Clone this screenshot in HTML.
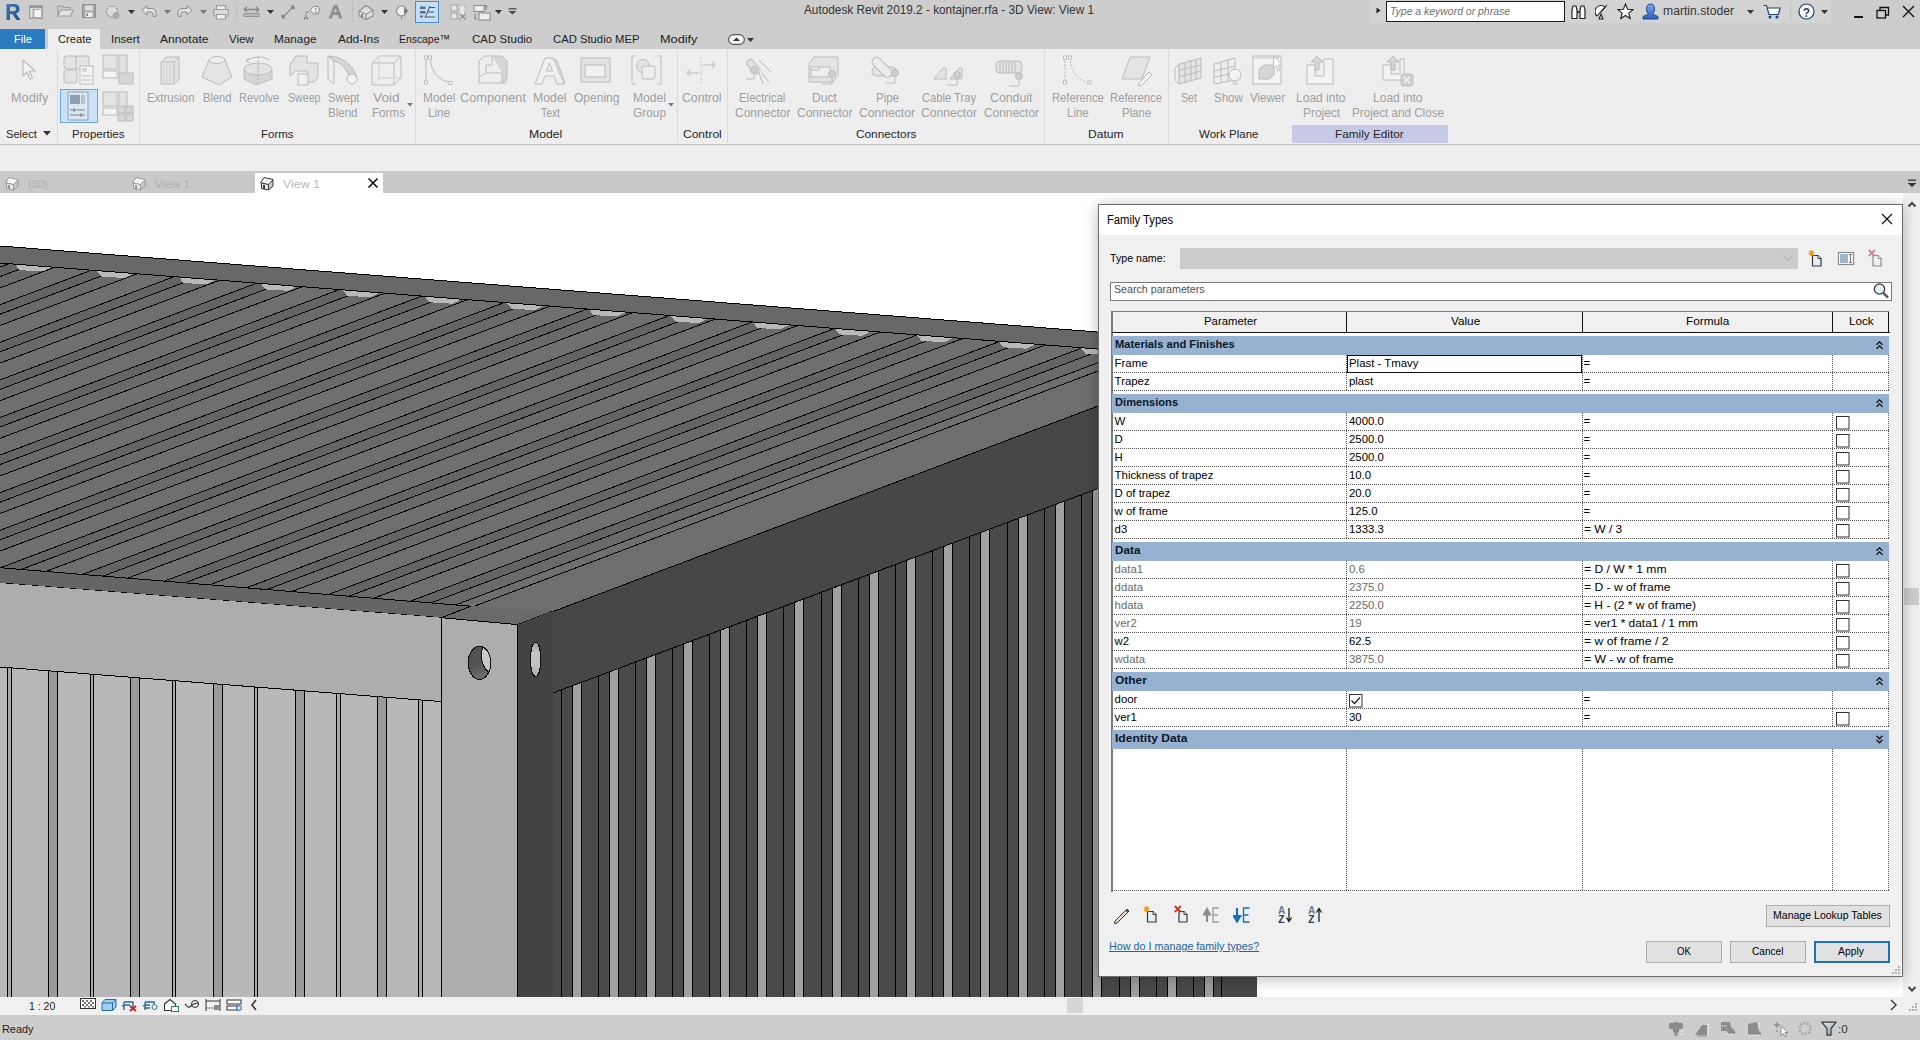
<!DOCTYPE html>
<html><head><meta charset="utf-8">
<style>
*{margin:0;padding:0;box-sizing:border-box}
html,body{width:1920px;height:1040px;overflow:hidden;background:#fff;font-family:"Liberation Sans",sans-serif;font-size:12px;color:#000}
.a{position:absolute}
.t{position:absolute;white-space:nowrap;line-height:1;transform-origin:0 0}
</style></head><body>
<svg class="a" style="left:0;top:0" width="1920" height="1040" viewBox="0 0 1920 1040" shape-rendering="crispEdges"><rect x="0.0" y="193.0" width="1920.0" height="804.0" fill="#ffffff"/>
<defs><clipPath id="roofclip"><polygon points="0.0,263.0 1300.0,364.9 1300.0,329.9 551.5,611.5 470.8,606.2 0.0,567.7"/></clipPath><clipPath id="rfclip"><polygon points="553,693.0 1300,412.7 1300,997 553,997"/></clipPath><clipPath id="ffclip"><polygon points="0,667.0 441.5,701.6 441.5,997 0,997"/></clipPath><linearGradient id="hole1" x1="0" y1="0" x2="0.3" y2="1"><stop offset="0" stop-color="#505050"/><stop offset="0.6" stop-color="#545454"/><stop offset="1" stop-color="#6a6a6a"/></linearGradient><linearGradient id="hole2" x1="0" y1="0" x2="0" y2="1"><stop offset="0" stop-color="#9a9a9a"/><stop offset="0.3" stop-color="#c4c4c4"/><stop offset="0.7" stop-color="#c0c0c0"/><stop offset="1" stop-color="#a8a8a8"/></linearGradient></defs>
<polygon points="0.0,263.0 1300.0,364.9 1300.0,329.9 551.5,611.5 470.8,606.2 0.0,567.7" fill="#6b6b6b"/>
<g clip-path="url(#roofclip)">
<polygon points="0.0,201.4 1300.0,-288.7 1300.0,-277.4 0.0,212.7" fill="#6a6a6a"/>
<polygon points="0.0,212.7 1300.0,-277.4 1300.0,-260.6 0.0,229.5" fill="#6f6f6f"/>
<polygon points="0.0,229.5 1300.0,-260.6 1300.0,-251.1 0.0,239.0" fill="#646464"/>
<polygon points="0.0,239.0 1300.0,-251.1 1300.0,-239.8 0.0,250.3" fill="#6a6a6a"/>
<polygon points="0.0,250.3 1300.0,-239.8 1300.0,-223.0 0.0,267.1" fill="#6f6f6f"/>
<polygon points="0.0,267.1 1300.0,-223.0 1300.0,-213.5 0.0,276.6" fill="#646464"/>
<polygon points="0.0,276.6 1300.0,-213.5 1300.0,-202.2 0.0,287.9" fill="#6a6a6a"/>
<polygon points="0.0,287.9 1300.0,-202.2 1300.0,-185.4 0.0,304.7" fill="#6f6f6f"/>
<polygon points="0.0,304.7 1300.0,-185.4 1300.0,-175.9 0.0,314.2" fill="#646464"/>
<polygon points="0.0,314.2 1300.0,-175.9 1300.0,-164.6 0.0,325.5" fill="#6a6a6a"/>
<polygon points="0.0,325.5 1300.0,-164.6 1300.0,-147.8 0.0,342.3" fill="#6f6f6f"/>
<polygon points="0.0,342.3 1300.0,-147.8 1300.0,-138.3 0.0,351.8" fill="#646464"/>
<polygon points="0.0,351.8 1300.0,-138.3 1300.0,-127.0 0.0,363.1" fill="#6a6a6a"/>
<polygon points="0.0,363.1 1300.0,-127.0 1300.0,-110.2 0.0,379.9" fill="#6f6f6f"/>
<polygon points="0.0,379.9 1300.0,-110.2 1300.0,-100.7 0.0,389.4" fill="#646464"/>
<polygon points="0.0,389.4 1300.0,-100.7 1300.0,-89.4 0.0,400.7" fill="#6a6a6a"/>
<polygon points="0.0,400.7 1300.0,-89.4 1300.0,-72.6 0.0,417.5" fill="#6f6f6f"/>
<polygon points="0.0,417.5 1300.0,-72.6 1300.0,-63.1 0.0,427.0" fill="#646464"/>
<polygon points="0.0,427.0 1300.0,-63.1 1300.0,-51.8 0.0,438.3" fill="#6a6a6a"/>
<polygon points="0.0,438.3 1300.0,-51.8 1300.0,-35.0 0.0,455.1" fill="#6f6f6f"/>
<polygon points="0.0,455.1 1300.0,-35.0 1300.0,-25.5 0.0,464.6" fill="#646464"/>
<polygon points="0.0,464.6 1300.0,-25.5 1300.0,-14.2 0.0,475.9" fill="#6a6a6a"/>
<polygon points="0.0,475.9 1300.0,-14.2 1300.0,2.6 0.0,492.7" fill="#6f6f6f"/>
<polygon points="0.0,492.7 1300.0,2.6 1300.0,12.1 0.0,502.2" fill="#646464"/>
<polygon points="0.0,502.2 1300.0,12.1 1300.0,23.4 0.0,513.5" fill="#6a6a6a"/>
<polygon points="0.0,513.5 1300.0,23.4 1300.0,40.2 0.0,530.3" fill="#6f6f6f"/>
<polygon points="0.0,530.3 1300.0,40.2 1300.0,49.7 0.0,539.8" fill="#646464"/>
<polygon points="0.0,539.8 1300.0,49.7 1300.0,61.0 0.0,551.1" fill="#6a6a6a"/>
<polygon points="0.0,551.1 1300.0,61.0 1300.0,77.8 0.0,567.9" fill="#6f6f6f"/>
<polygon points="0.0,567.9 1300.0,77.8 1300.0,87.3 0.0,577.4" fill="#646464"/>
<polygon points="0.0,577.4 1300.0,87.3 1300.0,98.6 0.0,588.7" fill="#6a6a6a"/>
<polygon points="0.0,588.7 1300.0,98.6 1300.0,115.4 0.0,605.5" fill="#6f6f6f"/>
<polygon points="0.0,605.5 1300.0,115.4 1300.0,124.9 0.0,615.0" fill="#646464"/>
<polygon points="0.0,615.0 1300.0,124.9 1300.0,136.2 0.0,626.3" fill="#6a6a6a"/>
<polygon points="0.0,626.3 1300.0,136.2 1300.0,153.0 0.0,643.1" fill="#6f6f6f"/>
<polygon points="0.0,643.1 1300.0,153.0 1300.0,162.5 0.0,652.6" fill="#646464"/>
<polygon points="0.0,652.6 1300.0,162.5 1300.0,173.8 0.0,663.9" fill="#6a6a6a"/>
<polygon points="0.0,663.9 1300.0,173.8 1300.0,190.6 0.0,680.7" fill="#6f6f6f"/>
<polygon points="0.0,680.7 1300.0,190.6 1300.0,200.1 0.0,690.2" fill="#646464"/>
<polygon points="0.0,690.2 1300.0,200.1 1300.0,211.4 0.0,701.5" fill="#6a6a6a"/>
<polygon points="0.0,701.5 1300.0,211.4 1300.0,228.2 0.0,718.3" fill="#6f6f6f"/>
<polygon points="0.0,718.3 1300.0,228.2 1300.0,237.7 0.0,727.8" fill="#646464"/>
<polygon points="0.0,727.8 1300.0,237.7 1300.0,249.0 0.0,739.1" fill="#6a6a6a"/>
<polygon points="0.0,739.1 1300.0,249.0 1300.0,265.8 0.0,755.9" fill="#6f6f6f"/>
<polygon points="0.0,755.9 1300.0,265.8 1300.0,275.3 0.0,765.4" fill="#646464"/>
<polygon points="0.0,765.4 1300.0,275.3 1300.0,286.6 0.0,776.7" fill="#6a6a6a"/>
<polygon points="0.0,776.7 1300.0,286.6 1300.0,303.4 0.0,793.5" fill="#6f6f6f"/>
<polygon points="0.0,793.5 1300.0,303.4 1300.0,312.9 0.0,803.0" fill="#646464"/>
<polygon points="0.0,803.0 1300.0,312.9 1300.0,324.2 0.0,814.3" fill="#6a6a6a"/>
<polygon points="0.0,814.3 1300.0,324.2 1300.0,341.0 0.0,831.1" fill="#6f6f6f"/>
<polygon points="0.0,831.1 1300.0,341.0 1300.0,350.5 0.0,840.6" fill="#646464"/>
<polygon points="0.0,840.6 1300.0,350.5 1300.0,361.8 0.0,851.9" fill="#6a6a6a"/>
<polygon points="0.0,851.9 1300.0,361.8 1300.0,378.6 0.0,868.7" fill="#6f6f6f"/>
<polygon points="0.0,868.7 1300.0,378.6 1300.0,388.1 0.0,878.2" fill="#646464"/>
<polygon points="0.0,878.2 1300.0,388.1 1300.0,399.4 0.0,889.5" fill="#6a6a6a"/>
<polygon points="0.0,889.5 1300.0,399.4 1300.0,416.2 0.0,906.3" fill="#6f6f6f"/>
<polygon points="0.0,906.3 1300.0,416.2 1300.0,425.7 0.0,915.8" fill="#646464"/>
<polygon points="0.0,915.8 1300.0,425.7 1300.0,437.0 0.0,927.1" fill="#6a6a6a"/>
<polygon points="0.0,927.1 1300.0,437.0 1300.0,453.8 0.0,943.9" fill="#6f6f6f"/>
<polygon points="0.0,943.9 1300.0,453.8 1300.0,463.3 0.0,953.4" fill="#646464"/>
<polygon points="0.0,953.4 1300.0,463.3 1300.0,474.6 0.0,964.7" fill="#6a6a6a"/>
<polygon points="0.0,964.7 1300.0,474.6 1300.0,491.4 0.0,981.5" fill="#6f6f6f"/>
<polygon points="0.0,981.5 1300.0,491.4 1300.0,500.9 0.0,991.0" fill="#646464"/>
<polygon points="0.0,991.0 1300.0,500.9 1300.0,512.2 0.0,1002.3" fill="#6a6a6a"/>
<polygon points="0.0,1002.3 1300.0,512.2 1300.0,529.0 0.0,1019.1" fill="#6f6f6f"/>
<polygon points="0.0,1019.1 1300.0,529.0 1300.0,538.5 0.0,1028.6" fill="#646464"/>
<polygon points="0.0,1028.6 1300.0,538.5 1300.0,549.8 0.0,1039.9" fill="#6a6a6a"/>
<polygon points="0.0,1039.9 1300.0,549.8 1300.0,566.6 0.0,1056.7" fill="#6f6f6f"/>
<polygon points="0.0,1056.7 1300.0,566.6 1300.0,576.1 0.0,1066.2" fill="#646464"/>
<polygon points="0.0,1066.2 1300.0,576.1 1300.0,587.4 0.0,1077.5" fill="#6a6a6a"/>
<polygon points="0.0,1077.5 1300.0,587.4 1300.0,604.2 0.0,1094.3" fill="#6f6f6f"/>
<polygon points="0.0,1094.3 1300.0,604.2 1300.0,613.7 0.0,1103.8" fill="#646464"/>
<polygon points="0.0,1103.8 1300.0,613.7 1300.0,625.0 0.0,1115.1" fill="#6a6a6a"/>
<polygon points="0.0,1115.1 1300.0,625.0 1300.0,641.8 0.0,1131.9" fill="#6f6f6f"/>
<polygon points="0.0,1131.9 1300.0,641.8 1300.0,651.3 0.0,1141.4" fill="#646464"/>
<polygon points="0.0,1141.4 1300.0,651.3 1300.0,662.6 0.0,1152.7" fill="#6a6a6a"/>
<polygon points="0.0,1152.7 1300.0,662.6 1300.0,679.4 0.0,1169.5" fill="#6f6f6f"/>
<polygon points="0.0,1169.5 1300.0,679.4 1300.0,688.9 0.0,1179.0" fill="#646464"/>
<line x1="0.0" y1="201.4" x2="1300.0" y2="-288.7" stroke="#000" stroke-width="1"/>
<line x1="0.0" y1="212.7" x2="1300.0" y2="-277.4" stroke="#000" stroke-width="1"/>
<line x1="0.0" y1="229.5" x2="1300.0" y2="-260.6" stroke="#000" stroke-width="1"/>
<line x1="0.0" y1="239.0" x2="1300.0" y2="-251.1" stroke="#000" stroke-width="1"/>
<line x1="0.0" y1="250.3" x2="1300.0" y2="-239.8" stroke="#000" stroke-width="1"/>
<line x1="0.0" y1="267.1" x2="1300.0" y2="-223.0" stroke="#000" stroke-width="1"/>
<line x1="0.0" y1="276.6" x2="1300.0" y2="-213.5" stroke="#000" stroke-width="1"/>
<line x1="0.0" y1="287.9" x2="1300.0" y2="-202.2" stroke="#000" stroke-width="1"/>
<line x1="0.0" y1="304.7" x2="1300.0" y2="-185.4" stroke="#000" stroke-width="1"/>
<line x1="0.0" y1="314.2" x2="1300.0" y2="-175.9" stroke="#000" stroke-width="1"/>
<line x1="0.0" y1="325.5" x2="1300.0" y2="-164.6" stroke="#000" stroke-width="1"/>
<line x1="0.0" y1="342.3" x2="1300.0" y2="-147.8" stroke="#000" stroke-width="1"/>
<line x1="0.0" y1="351.8" x2="1300.0" y2="-138.3" stroke="#000" stroke-width="1"/>
<line x1="0.0" y1="363.1" x2="1300.0" y2="-127.0" stroke="#000" stroke-width="1"/>
<line x1="0.0" y1="379.9" x2="1300.0" y2="-110.2" stroke="#000" stroke-width="1"/>
<line x1="0.0" y1="389.4" x2="1300.0" y2="-100.7" stroke="#000" stroke-width="1"/>
<line x1="0.0" y1="400.7" x2="1300.0" y2="-89.4" stroke="#000" stroke-width="1"/>
<line x1="0.0" y1="417.5" x2="1300.0" y2="-72.6" stroke="#000" stroke-width="1"/>
<line x1="0.0" y1="427.0" x2="1300.0" y2="-63.1" stroke="#000" stroke-width="1"/>
<line x1="0.0" y1="438.3" x2="1300.0" y2="-51.8" stroke="#000" stroke-width="1"/>
<line x1="0.0" y1="455.1" x2="1300.0" y2="-35.0" stroke="#000" stroke-width="1"/>
<line x1="0.0" y1="464.6" x2="1300.0" y2="-25.5" stroke="#000" stroke-width="1"/>
<line x1="0.0" y1="475.9" x2="1300.0" y2="-14.2" stroke="#000" stroke-width="1"/>
<line x1="0.0" y1="492.7" x2="1300.0" y2="2.6" stroke="#000" stroke-width="1"/>
<line x1="0.0" y1="502.2" x2="1300.0" y2="12.1" stroke="#000" stroke-width="1"/>
<line x1="0.0" y1="513.5" x2="1300.0" y2="23.4" stroke="#000" stroke-width="1"/>
<line x1="0.0" y1="530.3" x2="1300.0" y2="40.2" stroke="#000" stroke-width="1"/>
<line x1="0.0" y1="539.8" x2="1300.0" y2="49.7" stroke="#000" stroke-width="1"/>
<line x1="0.0" y1="551.1" x2="1300.0" y2="61.0" stroke="#000" stroke-width="1"/>
<line x1="0.0" y1="567.9" x2="1300.0" y2="77.8" stroke="#000" stroke-width="1"/>
<line x1="0.0" y1="577.4" x2="1300.0" y2="87.3" stroke="#000" stroke-width="1"/>
<line x1="0.0" y1="588.7" x2="1300.0" y2="98.6" stroke="#000" stroke-width="1"/>
<line x1="0.0" y1="605.5" x2="1300.0" y2="115.4" stroke="#000" stroke-width="1"/>
<line x1="0.0" y1="615.0" x2="1300.0" y2="124.9" stroke="#000" stroke-width="1"/>
<line x1="0.0" y1="626.3" x2="1300.0" y2="136.2" stroke="#000" stroke-width="1"/>
<line x1="0.0" y1="643.1" x2="1300.0" y2="153.0" stroke="#000" stroke-width="1"/>
<line x1="0.0" y1="652.6" x2="1300.0" y2="162.5" stroke="#000" stroke-width="1"/>
<line x1="0.0" y1="663.9" x2="1300.0" y2="173.8" stroke="#000" stroke-width="1"/>
<line x1="0.0" y1="680.7" x2="1300.0" y2="190.6" stroke="#000" stroke-width="1"/>
<line x1="0.0" y1="690.2" x2="1300.0" y2="200.1" stroke="#000" stroke-width="1"/>
<line x1="0.0" y1="701.5" x2="1300.0" y2="211.4" stroke="#000" stroke-width="1"/>
<line x1="0.0" y1="718.3" x2="1300.0" y2="228.2" stroke="#000" stroke-width="1"/>
<line x1="0.0" y1="727.8" x2="1300.0" y2="237.7" stroke="#000" stroke-width="1"/>
<line x1="0.0" y1="739.1" x2="1300.0" y2="249.0" stroke="#000" stroke-width="1"/>
<line x1="0.0" y1="755.9" x2="1300.0" y2="265.8" stroke="#000" stroke-width="1"/>
<line x1="0.0" y1="765.4" x2="1300.0" y2="275.3" stroke="#000" stroke-width="1"/>
<line x1="0.0" y1="776.7" x2="1300.0" y2="286.6" stroke="#000" stroke-width="1"/>
<polygon points="0.0,785.0 1300.0,294.9 1300.0,329.9 0.0,820.0" fill="#6e6e6e"/>
<line x1="0.0" y1="785.0" x2="1300.0" y2="294.9" stroke="#000" stroke-width="1"/>
</g>
<polygon points="14.6,264.1 51.6,267.0 42.6,271.5 19.6,270.1" fill="#b9b9b9"/>
<polygon points="96.6,270.6 133.6,273.5 124.6,278.0 101.6,276.6" fill="#b9b9b9"/>
<polygon points="178.6,277.0 215.6,279.9 206.6,284.4 183.6,283.0" fill="#b9b9b9"/>
<polygon points="260.6,283.4 297.6,286.3 288.6,290.8 265.6,289.4" fill="#b9b9b9"/>
<polygon points="342.6,289.9 379.6,292.8 370.6,297.3 347.6,295.9" fill="#b9b9b9"/>
<polygon points="424.6,296.3 461.6,299.2 452.6,303.7 429.6,302.3" fill="#b9b9b9"/>
<polygon points="506.6,302.7 543.6,305.6 534.6,310.1 511.6,308.7" fill="#b9b9b9"/>
<polygon points="588.6,309.1 625.6,312.0 616.6,316.5 593.6,315.1" fill="#b9b9b9"/>
<polygon points="670.6,315.6 707.6,318.5 698.6,323.0 675.6,321.6" fill="#b9b9b9"/>
<polygon points="752.6,322.0 789.6,324.9 780.6,329.4 757.6,328.0" fill="#b9b9b9"/>
<polygon points="834.6,328.4 871.6,331.3 862.6,335.8 839.6,334.4" fill="#b9b9b9"/>
<polygon points="916.6,334.9 953.6,337.8 944.6,342.3 921.6,340.9" fill="#b9b9b9"/>
<polygon points="998.6,341.3 1035.6,344.2 1026.6,348.7 1003.6,347.3" fill="#b9b9b9"/>
<polygon points="1080.6,347.7 1117.6,350.6 1108.6,355.1 1085.6,353.7" fill="#b9b9b9"/>
<polygon points="1162.6,354.1 1199.6,357.0 1190.6,361.5 1167.6,360.1" fill="#b9b9b9"/>
<polygon points="1244.6,360.6 1281.6,363.5 1272.6,368.0 1249.6,366.6" fill="#b9b9b9"/>
<polygon points="0.0,246.0 1300.0,347.9 1300.0,364.9 0.0,263.0" fill="#686868"/>
<line x1="0.0" y1="246.0" x2="1300.0" y2="347.9" stroke="#000" stroke-width="1"/>
<line x1="0.0" y1="263.0" x2="1300.0" y2="364.9" stroke="#000" stroke-width="1"/>
<polygon points="0.0,567.7 470.8,606.2 441.5,617.7 0.0,583.0" fill="#656565"/>
<line x1="0.0" y1="567.7" x2="470.8" y2="606.2" stroke="#000" stroke-width="1"/>
<line x1="0.0" y1="583.0" x2="441.5" y2="617.7" stroke="#000" stroke-width="1"/>
<polygon points="441.5,617.7 470.8,606.2 551.5,611.5 517.7,624.6" fill="#6a6a6a"/>
<line x1="441.5" y1="617.7" x2="470.8" y2="606.2" stroke="#000" stroke-width="1"/>
<line x1="517.7" y1="624.6" x2="553.0" y2="611.0" stroke="#000" stroke-width="1"/>
<polygon points="0.0,583.0 441.5,617.7 441.5,997.0 0.0,997.0" fill="#adadad"/>
<g clip-path="url(#ffclip)">
<rect x="0.0" y="600.0" width="441.5" height="400.0" fill="#b8b8b8"/>
<rect x="7.0" y="600.0" width="4.0" height="400.0" fill="#a9a9a9"/>
<line x1="7.5" y1="600.0" x2="7.5" y2="997.0" stroke="#000" stroke-width="1"/>
<line x1="11.5" y1="600.0" x2="11.5" y2="997.0" stroke="#000" stroke-width="1"/>
<rect x="90.0" y="600.0" width="3.0" height="400.0" fill="#a9a9a9"/>
<line x1="90.5" y1="600.0" x2="90.5" y2="997.0" stroke="#000" stroke-width="1"/>
<line x1="93.5" y1="600.0" x2="93.5" y2="997.0" stroke="#000" stroke-width="1"/>
<rect x="172.0" y="600.0" width="3.0" height="400.0" fill="#a9a9a9"/>
<line x1="172.5" y1="600.0" x2="172.5" y2="997.0" stroke="#000" stroke-width="1"/>
<line x1="175.5" y1="600.0" x2="175.5" y2="997.0" stroke="#000" stroke-width="1"/>
<rect x="254.0" y="600.0" width="3.0" height="400.0" fill="#a9a9a9"/>
<line x1="254.5" y1="600.0" x2="254.5" y2="997.0" stroke="#000" stroke-width="1"/>
<line x1="257.5" y1="600.0" x2="257.5" y2="997.0" stroke="#000" stroke-width="1"/>
<rect x="336.0" y="600.0" width="4.0" height="400.0" fill="#a9a9a9"/>
<line x1="336.5" y1="600.0" x2="336.5" y2="997.0" stroke="#000" stroke-width="1"/>
<line x1="340.5" y1="600.0" x2="340.5" y2="997.0" stroke="#000" stroke-width="1"/>
<rect x="418.0" y="600.0" width="4.0" height="400.0" fill="#a9a9a9"/>
<line x1="418.5" y1="600.0" x2="418.5" y2="997.0" stroke="#000" stroke-width="1"/>
<line x1="422.5" y1="600.0" x2="422.5" y2="997.0" stroke="#000" stroke-width="1"/>
<rect x="48.0" y="600.0" width="9.0" height="400.0" fill="#9a9a9a"/>
<line x1="48.5" y1="600.0" x2="48.5" y2="997.0" stroke="#000" stroke-width="1"/>
<line x1="57.5" y1="600.0" x2="57.5" y2="997.0" stroke="#000" stroke-width="1"/>
<rect x="130.0" y="600.0" width="9.0" height="400.0" fill="#9a9a9a"/>
<line x1="130.5" y1="600.0" x2="130.5" y2="997.0" stroke="#000" stroke-width="1"/>
<line x1="139.5" y1="600.0" x2="139.5" y2="997.0" stroke="#000" stroke-width="1"/>
<rect x="213.0" y="600.0" width="9.0" height="400.0" fill="#9a9a9a"/>
<line x1="213.5" y1="600.0" x2="213.5" y2="997.0" stroke="#000" stroke-width="1"/>
<line x1="222.5" y1="600.0" x2="222.5" y2="997.0" stroke="#000" stroke-width="1"/>
<rect x="295.0" y="600.0" width="9.0" height="400.0" fill="#9a9a9a"/>
<line x1="295.5" y1="600.0" x2="295.5" y2="997.0" stroke="#000" stroke-width="1"/>
<line x1="304.5" y1="600.0" x2="304.5" y2="997.0" stroke="#000" stroke-width="1"/>
<rect x="377.0" y="600.0" width="9.0" height="400.0" fill="#9a9a9a"/>
<line x1="377.5" y1="600.0" x2="377.5" y2="997.0" stroke="#000" stroke-width="1"/>
<line x1="386.5" y1="600.0" x2="386.5" y2="997.0" stroke="#000" stroke-width="1"/>
</g>
<line x1="0.0" y1="667.0" x2="441.5" y2="701.6" stroke="#000" stroke-width="1"/>
<polygon points="441.5,617.7 517.7,624.6 517.7,997.0 441.5,997.0" fill="#adadad"/>
<line x1="441.5" y1="617.7" x2="441.5" y2="997.0" stroke="#000" stroke-width="1"/>
<line x1="517.5" y1="624.6" x2="517.5" y2="997.0" stroke="#000" stroke-width="1"/>
<line x1="441.5" y1="617.7" x2="517.7" y2="624.6" stroke="#000" stroke-width="1"/>
<ellipse cx="479.5" cy="662.8" rx="11.2" ry="16.6" fill="url(#hole1)" stroke="#111" stroke-width="1.2"/>
<path d="M482.4,647 A11.2,16.6 0 0 1 488.8,672.3 Q482.5,667 481.6,659 Q481.3,652 482.4,647 Z" fill="#c9c9c9" stroke="#111" stroke-width="1"/>
<polygon points="517.7,624.6 553.0,611.0 553.0,997.0 517.7,997.0" fill="#434343"/>
<ellipse cx="535.6" cy="659.4" rx="5.3" ry="17.2" fill="url(#hole2)" stroke="#111" stroke-width="1.2"/>
<line x1="553.5" y1="611.0" x2="553.5" y2="997.0" stroke="#000" stroke-width="1"/>
<polygon points="553.0,611.5 1300.0,329.9 1300.0,412.7 553.0,693.0" fill="#474747"/>
<line x1="553.0" y1="611.5" x2="1300.0" y2="329.9" stroke="#000" stroke-width="1"/>
<polygon points="553.0,693.0 1300.0,412.7 1300.0,997.0 553.0,997.0" fill="#4a4a4a"/>
<g clip-path="url(#rfclip)">
<rect x="572.0" y="300.0" width="9.0" height="700.0" fill="#a0a0a0"/>
<line x1="561.5" y1="300.0" x2="561.5" y2="997.0" stroke="#000" stroke-width="1"/>
<line x1="572.5" y1="300.0" x2="572.5" y2="997.0" stroke="#000" stroke-width="1"/>
<line x1="581.5" y1="300.0" x2="581.5" y2="997.0" stroke="#000" stroke-width="1"/>
<rect x="609.0" y="300.0" width="9.0" height="700.0" fill="#a0a0a0"/>
<line x1="598.5" y1="300.0" x2="598.5" y2="997.0" stroke="#000" stroke-width="1"/>
<line x1="609.5" y1="300.0" x2="609.5" y2="997.0" stroke="#000" stroke-width="1"/>
<line x1="618.5" y1="300.0" x2="618.5" y2="997.0" stroke="#000" stroke-width="1"/>
<rect x="646.0" y="300.0" width="9.0" height="700.0" fill="#a0a0a0"/>
<line x1="635.5" y1="300.0" x2="635.5" y2="997.0" stroke="#000" stroke-width="1"/>
<line x1="646.5" y1="300.0" x2="646.5" y2="997.0" stroke="#000" stroke-width="1"/>
<line x1="655.5" y1="300.0" x2="655.5" y2="997.0" stroke="#000" stroke-width="1"/>
<rect x="683.0" y="300.0" width="9.0" height="700.0" fill="#a0a0a0"/>
<line x1="672.5" y1="300.0" x2="672.5" y2="997.0" stroke="#000" stroke-width="1"/>
<line x1="683.5" y1="300.0" x2="683.5" y2="997.0" stroke="#000" stroke-width="1"/>
<line x1="692.5" y1="300.0" x2="692.5" y2="997.0" stroke="#000" stroke-width="1"/>
<rect x="720.0" y="300.0" width="9.0" height="700.0" fill="#a0a0a0"/>
<line x1="709.5" y1="300.0" x2="709.5" y2="997.0" stroke="#000" stroke-width="1"/>
<line x1="720.5" y1="300.0" x2="720.5" y2="997.0" stroke="#000" stroke-width="1"/>
<line x1="729.5" y1="300.0" x2="729.5" y2="997.0" stroke="#000" stroke-width="1"/>
<rect x="757.0" y="300.0" width="9.0" height="700.0" fill="#a0a0a0"/>
<line x1="746.5" y1="300.0" x2="746.5" y2="997.0" stroke="#000" stroke-width="1"/>
<line x1="757.5" y1="300.0" x2="757.5" y2="997.0" stroke="#000" stroke-width="1"/>
<line x1="766.5" y1="300.0" x2="766.5" y2="997.0" stroke="#000" stroke-width="1"/>
<rect x="794.0" y="300.0" width="9.0" height="700.0" fill="#a0a0a0"/>
<line x1="783.5" y1="300.0" x2="783.5" y2="997.0" stroke="#000" stroke-width="1"/>
<line x1="794.5" y1="300.0" x2="794.5" y2="997.0" stroke="#000" stroke-width="1"/>
<line x1="803.5" y1="300.0" x2="803.5" y2="997.0" stroke="#000" stroke-width="1"/>
<rect x="832.0" y="300.0" width="9.0" height="700.0" fill="#a0a0a0"/>
<line x1="821.5" y1="300.0" x2="821.5" y2="997.0" stroke="#000" stroke-width="1"/>
<line x1="832.5" y1="300.0" x2="832.5" y2="997.0" stroke="#000" stroke-width="1"/>
<line x1="841.5" y1="300.0" x2="841.5" y2="997.0" stroke="#000" stroke-width="1"/>
<rect x="869.0" y="300.0" width="9.0" height="700.0" fill="#a0a0a0"/>
<line x1="858.5" y1="300.0" x2="858.5" y2="997.0" stroke="#000" stroke-width="1"/>
<line x1="869.5" y1="300.0" x2="869.5" y2="997.0" stroke="#000" stroke-width="1"/>
<line x1="878.5" y1="300.0" x2="878.5" y2="997.0" stroke="#000" stroke-width="1"/>
<rect x="906.0" y="300.0" width="9.0" height="700.0" fill="#a0a0a0"/>
<line x1="895.5" y1="300.0" x2="895.5" y2="997.0" stroke="#000" stroke-width="1"/>
<line x1="906.5" y1="300.0" x2="906.5" y2="997.0" stroke="#000" stroke-width="1"/>
<line x1="915.5" y1="300.0" x2="915.5" y2="997.0" stroke="#000" stroke-width="1"/>
<rect x="943.0" y="300.0" width="9.0" height="700.0" fill="#a0a0a0"/>
<line x1="932.5" y1="300.0" x2="932.5" y2="997.0" stroke="#000" stroke-width="1"/>
<line x1="943.5" y1="300.0" x2="943.5" y2="997.0" stroke="#000" stroke-width="1"/>
<line x1="952.5" y1="300.0" x2="952.5" y2="997.0" stroke="#000" stroke-width="1"/>
<rect x="980.0" y="300.0" width="9.0" height="700.0" fill="#a0a0a0"/>
<line x1="969.5" y1="300.0" x2="969.5" y2="997.0" stroke="#000" stroke-width="1"/>
<line x1="980.5" y1="300.0" x2="980.5" y2="997.0" stroke="#000" stroke-width="1"/>
<line x1="989.5" y1="300.0" x2="989.5" y2="997.0" stroke="#000" stroke-width="1"/>
<rect x="1018.0" y="300.0" width="9.0" height="700.0" fill="#a0a0a0"/>
<line x1="1007.5" y1="300.0" x2="1007.5" y2="997.0" stroke="#000" stroke-width="1"/>
<line x1="1018.5" y1="300.0" x2="1018.5" y2="997.0" stroke="#000" stroke-width="1"/>
<line x1="1027.5" y1="300.0" x2="1027.5" y2="997.0" stroke="#000" stroke-width="1"/>
<rect x="1055.0" y="300.0" width="9.0" height="700.0" fill="#a0a0a0"/>
<line x1="1044.5" y1="300.0" x2="1044.5" y2="997.0" stroke="#000" stroke-width="1"/>
<line x1="1055.5" y1="300.0" x2="1055.5" y2="997.0" stroke="#000" stroke-width="1"/>
<line x1="1064.5" y1="300.0" x2="1064.5" y2="997.0" stroke="#000" stroke-width="1"/>
<rect x="1092.0" y="300.0" width="9.0" height="700.0" fill="#a0a0a0"/>
<line x1="1081.5" y1="300.0" x2="1081.5" y2="997.0" stroke="#000" stroke-width="1"/>
<line x1="1092.5" y1="300.0" x2="1092.5" y2="997.0" stroke="#000" stroke-width="1"/>
<line x1="1101.5" y1="300.0" x2="1101.5" y2="997.0" stroke="#000" stroke-width="1"/>
<rect x="1130.0" y="300.0" width="9.0" height="700.0" fill="#a0a0a0"/>
<line x1="1119.5" y1="300.0" x2="1119.5" y2="997.0" stroke="#000" stroke-width="1"/>
<line x1="1130.5" y1="300.0" x2="1130.5" y2="997.0" stroke="#000" stroke-width="1"/>
<line x1="1139.5" y1="300.0" x2="1139.5" y2="997.0" stroke="#000" stroke-width="1"/>
<rect x="1167.0" y="300.0" width="9.0" height="700.0" fill="#a0a0a0"/>
<line x1="1156.5" y1="300.0" x2="1156.5" y2="997.0" stroke="#000" stroke-width="1"/>
<line x1="1167.5" y1="300.0" x2="1167.5" y2="997.0" stroke="#000" stroke-width="1"/>
<line x1="1176.5" y1="300.0" x2="1176.5" y2="997.0" stroke="#000" stroke-width="1"/>
<rect x="1204.0" y="300.0" width="9.0" height="700.0" fill="#a0a0a0"/>
<line x1="1193.5" y1="300.0" x2="1193.5" y2="997.0" stroke="#000" stroke-width="1"/>
<line x1="1204.5" y1="300.0" x2="1204.5" y2="997.0" stroke="#000" stroke-width="1"/>
<line x1="1213.5" y1="300.0" x2="1213.5" y2="997.0" stroke="#000" stroke-width="1"/>
</g>
<line x1="553.0" y1="693.0" x2="1300.0" y2="412.7" stroke="#000" stroke-width="1"/>
<rect x="1221.5" y="700.0" width="35.5" height="297.0" fill="#474747"/>
<line x1="1221.5" y1="700.0" x2="1221.5" y2="997.0" stroke="#000" stroke-width="1"/>
<rect x="1257.0" y="900.0" width="700.0" height="97.0" fill="#ffffff"/>
</svg>
<div class="a" style="left:0px;top:0px;width:1920px;height:49px;background:#cdcdcd;"></div>
<div class="a" style="left:1370px;top:0px;width:461px;height:23px;background:#d3d3d3;"></div>
<div class="a" style="left:1386px;top:1px;width:179px;height:21px;background:#fff;border:1px solid #1a1a1a;"></div>
<span id="c1" class="t" style="transform:scaleX(0.9436);left:804.00px;top:3.62px;font-size:12.5px;color:#333;">Autodesk Revit 2019.2 - kontajner.rfa - 3D View: View 1</span>
<span id="c2" class="t" style="transform:scaleX(0.9497);left:1390.00px;top:6.19px;font-size:11px;color:#6f6f6f;font-style:italic;">Type a keyword or phrase</span>
<span id="c3" class="t" style="transform:scaleX(1.0138);left:1663.00px;top:5.34px;font-size:12px;color:#333;">martin.stoder</span>
<div class="a" style="left:0px;top:29px;width:45px;height:19.5px;background:#2a7ac0;"></div>
<div class="a" style="left:48px;top:29px;width:52px;height:20px;background:#eeeeee;"></div>
<span id="c4" class="t" style="transform:scaleX(0.9552);left:14.00px;top:33.00px;font-size:11.7px;color:#fff;">File</span>
<span id="c5" class="t" style="transform:scaleX(0.9546);left:57.50px;top:33.00px;font-size:11.7px;color:#222;">Create</span>
<span id="c6" class="t" style="transform:scaleX(0.9834);left:111.00px;top:33.00px;font-size:11.7px;color:#222;">Insert</span>
<span id="c7" class="t" style="transform:scaleX(1.0385);left:160.40px;top:33.00px;font-size:11.7px;color:#222;">Annotate</span>
<span id="c8" class="t" style="transform:scaleX(0.9751);left:229.20px;top:33.00px;font-size:11.7px;color:#222;">View</span>
<span id="c9" class="t" style="transform:scaleX(1.0059);left:274.20px;top:33.00px;font-size:11.7px;color:#222;">Manage</span>
<span id="c10" class="t" style="transform:scaleX(1.0228);left:337.50px;top:33.00px;font-size:11.7px;color:#222;">Add-Ins</span>
<span id="c11" class="t" style="transform:scaleX(0.8885);left:399.20px;top:33.00px;font-size:11.7px;color:#222;">Enscape™</span>
<span id="c12" class="t" style="transform:scaleX(0.9873);left:471.70px;top:33.00px;font-size:11.7px;color:#222;">CAD Studio</span>
<span id="c13" class="t" style="transform:scaleX(0.9650);left:552.50px;top:33.00px;font-size:11.7px;color:#222;">CAD Studio MEP</span>
<span id="c14" class="t" style="transform:scaleX(1.0889);left:660.00px;top:33.00px;font-size:11.7px;color:#222;">Modify</span>
<div class="a" style="left:0px;top:48.5px;width:1920px;height:96px;background:#eeeeee;border-bottom:1px solid #c4c4c4;"></div>
<div class="a" style="left:0px;top:145px;width:1920px;height:26px;background:#eeeeee;"></div>
<div class="a" style="left:56.5px;top:50px;width:1px;height:93px;background:#dadada;"></div>
<div class="a" style="left:139px;top:50px;width:1px;height:93px;background:#dadada;"></div>
<div class="a" style="left:415px;top:50px;width:1px;height:93px;background:#dadada;"></div>
<div class="a" style="left:676.5px;top:50px;width:1px;height:93px;background:#dadada;"></div>
<div class="a" style="left:727px;top:50px;width:1px;height:93px;background:#dadada;"></div>
<div class="a" style="left:1044px;top:50px;width:1px;height:93px;background:#dadada;"></div>
<div class="a" style="left:1167.5px;top:50px;width:1px;height:93px;background:#dadada;"></div>
<div class="a" style="left:1292px;top:125px;width:156px;height:18px;background:#c6cae6;"></div>
<span id="c15" class="t" style="transform:scaleX(1.0498);left:10.60px;top:91.76px;font-size:12.1px;color:#9e9e9e;">Modify</span>
<span id="c16" class="t" style="transform:scaleX(0.9421);left:146.50px;top:91.76px;font-size:12.1px;color:#9e9e9e;">Extrusion</span>
<span id="c17" class="t" style="transform:scaleX(0.9212);left:202.50px;top:91.76px;font-size:12.1px;color:#9e9e9e;">Blend</span>
<span id="c18" class="t" style="transform:scaleX(0.9210);left:239.25px;top:91.76px;font-size:12.1px;color:#9e9e9e;">Revolve</span>
<span id="c19" class="t" style="transform:scaleX(0.8787);left:287.50px;top:91.76px;font-size:12.1px;color:#9e9e9e;">Sweep</span>
<span id="c20" class="t" style="transform:scaleX(0.9368);left:327.50px;top:91.76px;font-size:12.1px;color:#9e9e9e;">Swept</span>
<span id="c21" class="t" style="transform:scaleX(0.9535);left:328.00px;top:106.76px;font-size:12.1px;color:#9e9e9e;">Blend</span>
<span id="c22" class="t" style="transform:scaleX(1.1360);left:372.50px;top:91.76px;font-size:12.1px;color:#9e9e9e;">Void</span>
<span id="c23" class="t" style="transform:scaleX(0.9631);left:372.00px;top:106.76px;font-size:12.1px;color:#9e9e9e;">Forms</span>
<span id="c24" class="t" style="transform:scaleX(0.9862);left:422.50px;top:91.76px;font-size:12.1px;color:#9e9e9e;">Model</span>
<span id="c25" class="t" style="transform:scaleX(0.9617);left:428.00px;top:106.76px;font-size:12.1px;color:#9e9e9e;">Line</span>
<span id="c26" class="t" style="transform:scaleX(1.0555);left:460.00px;top:91.76px;font-size:12.1px;color:#9e9e9e;">Component</span>
<span id="c27" class="t" style="transform:scaleX(1.0166);left:533.25px;top:91.76px;font-size:12.1px;color:#9e9e9e;">Model</span>
<span id="c28" class="t" style="transform:scaleX(0.8563);left:541.00px;top:106.76px;font-size:12.1px;color:#9e9e9e;">Text</span>
<span id="c29" class="t" style="transform:scaleX(0.9949);left:573.50px;top:91.76px;font-size:12.1px;color:#9e9e9e;">Opening</span>
<span id="c30" class="t" style="transform:scaleX(1.0014);left:632.50px;top:91.76px;font-size:12.1px;color:#9e9e9e;">Model</span>
<span id="c31" class="t" style="transform:scaleX(0.9814);left:633.00px;top:106.76px;font-size:12.1px;color:#9e9e9e;">Group</span>
<span id="c32" class="t" style="transform:scaleX(1.0128);left:682.00px;top:91.76px;font-size:12.1px;color:#9e9e9e;">Control</span>
<span id="c33" class="t" style="transform:scaleX(0.9427);left:739.25px;top:91.76px;font-size:12.1px;color:#9e9e9e;">Electrical</span>
<span id="c34" class="t" style="transform:scaleX(0.9944);left:734.50px;top:106.76px;font-size:12.1px;color:#9e9e9e;">Connector</span>
<span id="c35" class="t" style="transform:scaleX(1.0050);left:812.00px;top:91.76px;font-size:12.1px;color:#9e9e9e;">Duct</span>
<span id="c36" class="t" style="transform:scaleX(0.9944);left:796.50px;top:106.76px;font-size:12.1px;color:#9e9e9e;">Connector</span>
<span id="c37" class="t" style="transform:scaleX(0.9497);left:876.00px;top:91.76px;font-size:12.1px;color:#9e9e9e;">Pipe</span>
<span id="c38" class="t" style="transform:scaleX(1.0034);left:859.00px;top:106.76px;font-size:12.1px;color:#9e9e9e;">Connector</span>
<span id="c39" class="t" style="transform:scaleX(0.9233);left:922.00px;top:91.76px;font-size:12.1px;color:#9e9e9e;">Cable Tray</span>
<span id="c40" class="t" style="transform:scaleX(1.0034);left:921.00px;top:106.76px;font-size:12.1px;color:#9e9e9e;">Connector</span>
<span id="c41" class="t" style="transform:scaleX(1.0195);left:990.00px;top:91.76px;font-size:12.1px;color:#9e9e9e;">Conduit</span>
<span id="c42" class="t" style="transform:scaleX(0.9854);left:983.75px;top:106.76px;font-size:12.1px;color:#9e9e9e;">Connector</span>
<span id="c43" class="t" style="transform:scaleX(0.9272);left:1052.00px;top:91.76px;font-size:12.1px;color:#9e9e9e;">Reference</span>
<span id="c44" class="t" style="transform:scaleX(0.9508);left:1067.00px;top:106.76px;font-size:12.1px;color:#9e9e9e;">Line</span>
<span id="c45" class="t" style="transform:scaleX(0.9317);left:1110.00px;top:91.76px;font-size:12.1px;color:#9e9e9e;">Reference</span>
<span id="c46" class="t" style="transform:scaleX(0.9455);left:1122.00px;top:106.76px;font-size:12.1px;color:#9e9e9e;">Plane</span>
<span id="c47" class="t" style="transform:scaleX(0.8812);left:1181.00px;top:91.76px;font-size:12.1px;color:#9e9e9e;">Set</span>
<span id="c48" class="t" style="transform:scaleX(0.9499);left:1213.75px;top:91.76px;font-size:12.1px;color:#9e9e9e;">Show</span>
<span id="c49" class="t" style="transform:scaleX(0.9524);left:1250.00px;top:91.76px;font-size:12.1px;color:#9e9e9e;">Viewer</span>
<span id="c50" class="t" style="transform:scaleX(0.9947);left:1296.25px;top:91.76px;font-size:12.1px;color:#9e9e9e;">Load into</span>
<span id="c51" class="t" style="transform:scaleX(0.9830);left:1303.00px;top:106.76px;font-size:12.1px;color:#9e9e9e;">Project</span>
<span id="c52" class="t" style="transform:scaleX(0.9947);left:1373.00px;top:91.76px;font-size:12.1px;color:#9e9e9e;">Load into</span>
<span id="c53" class="t" style="transform:scaleX(0.9637);left:1352.00px;top:106.76px;font-size:12.1px;color:#9e9e9e;">Project and Close</span>
<span id="c54" class="t" style="transform:scaleX(0.9466);left:6.25px;top:128.35px;font-size:11.7px;color:#262626;">Select</span>
<span id="c55" class="t" style="transform:scaleX(0.9835);left:71.60px;top:128.35px;font-size:11.7px;color:#262626;">Properties</span>
<span id="c56" class="t" style="transform:scaleX(0.9811);left:261.25px;top:128.35px;font-size:11.7px;color:#262626;">Forms</span>
<span id="c57" class="t" style="transform:scaleX(1.0442);left:529.25px;top:128.35px;font-size:11.7px;color:#262626;">Model</span>
<span id="c58" class="t" style="transform:scaleX(1.0282);left:682.50px;top:128.35px;font-size:11.7px;color:#262626;">Control</span>
<span id="c59" class="t" style="transform:scaleX(1.0120);left:856.25px;top:128.35px;font-size:11.7px;color:#262626;">Connectors</span>
<span id="c60" class="t" style="transform:scaleX(1.0309);left:1088.25px;top:128.35px;font-size:11.7px;color:#262626;">Datum</span>
<span id="c61" class="t" style="transform:scaleX(0.9883);left:1199.25px;top:128.35px;font-size:11.7px;color:#262626;">Work Plane</span>
<span id="c62" class="t" style="transform:scaleX(1.0080);left:1335.00px;top:128.35px;font-size:11.7px;color:#262626;">Family Editor</span>
<svg class="a" style="left:43px;top:131px;" width="8" height="5" viewBox="0 0 8 5"><path d="M0,0H8L4,4.5Z" fill="#333"/></svg>
<svg class="a" style="left:407px;top:103px;" width="6" height="4" viewBox="0 0 6 4"><path d="M0,0H6L3,3.5Z" fill="#777"/></svg>
<svg class="a" style="left:668px;top:103px;" width="6" height="4" viewBox="0 0 6 4"><path d="M0,0H6L3,3.5Z" fill="#777"/></svg>
<div class="a" style="left:0px;top:171px;width:1920px;height:22px;background:#c9c9c9;"></div>
<div class="a" style="left:255px;top:173px;width:128px;height:20px;background:#ffffff;"></div>
<span id="c63" class="t" style="transform:scaleX(0.8791);left:28.00px;top:178.40px;font-size:11.7px;color:#b0b0b0;">{3D}</span>
<span id="c64" class="t" style="transform:scaleX(1.0036);left:155.00px;top:178.40px;font-size:11.7px;color:#b0b0b0;">View 1</span>
<span id="c65" class="t" style="transform:scaleX(1.0609);left:283.00px;top:178.40px;font-size:11.7px;color:#b9b9b9;">View 1</span>
<svg class="a" style="left:367px;top:177px;" width="12" height="12" viewBox="0 0 12 12"><path d="M1.5,1.5L10.5,10.5M10.5,1.5L1.5,10.5" stroke="#111" stroke-width="1.6"/></svg>
<div class="a" style="left:0px;top:997px;width:1920px;height:18px;background:#f0f0f0;"></div>
<span id="c66" class="t" style="transform:scaleX(0.8991);left:28.90px;top:999.80px;font-size:11.7px;color:#222;">1 : 20</span>
<div class="a" style="left:0px;top:1015px;width:1920px;height:25px;background:#cdcdcd;"></div>
<span id="c67" class="t" style="transform:scaleX(0.9320);left:1.50px;top:1022.80px;font-size:11.7px;color:#222;">Ready</span>
<svg class="a" style="left:5px;top:3px" width="16" height="18" viewBox="0 0 16 18"><defs><linearGradient id="rg" x1="0" y1="0" x2="1" y2="1"><stop offset="0" stop-color="#3f79b5"/><stop offset="1" stop-color="#1d4f86"/></linearGradient></defs><path d="M1.5,1H9Q14.5,1 14.5,6Q14.5,9.5 11,10.5L15.5,17H11.5L7.5,11H5V17H1.5Z M5,3.8V8.3H8.8Q11,8.3 11,6Q11,3.8 8.8,3.8Z" fill="url(#rg)" fill-rule="evenodd"/></svg>
<svg class="a" style="left:29px;top:5px" width="14" height="14" viewBox="0 0 14 14"><rect x="0.7" y="0.7" width="12.6" height="12.6" fill="#e8e8e8" stroke="#9c9c9c" stroke-width="1.2"/><rect x="0.7" y="0.7" width="12.6" height="2.5" fill="#9a9a9a"/><path d="M4,3.5V13M6,6H12M6,9H12M6,11H12" stroke="#9c9c9c" stroke-width="0.9"/><rect x="5" y="4.5" width="7.5" height="8" fill="#f5f5f5" stroke="#9c9c9c" stroke-width="0.7"/></svg>
<svg class="a" style="left:57px;top:5px" width="17" height="12" viewBox="0 0 17 12"><path d="M0.8,1H5.5L7,2.5H13V5" fill="none" stroke="#9c9c9c" stroke-width="1.1"/><path d="M0.8,1V11H13.5L16.2,5H3.5L0.8,11" fill="#e3e3e3" stroke="#9c9c9c" stroke-width="1.1" stroke-linejoin="round"/></svg>
<svg class="a" style="left:82px;top:4px" width="14" height="14" viewBox="0 0 14 14"><rect x="0.7" y="0.7" width="12.6" height="12.6" fill="#a9a9a9" stroke="#8e8e8e" stroke-width="1.2"/><rect x="3" y="1.5" width="8" height="5" fill="#ddd"/><rect x="3.5" y="8.5" width="7" height="4.5" fill="#eee"/><rect x="4.5" y="9.5" width="1.5" height="2.5" fill="#777"/></svg>
<svg class="a" style="left:105px;top:4px" width="16" height="16" viewBox="0 0 16 16"><circle cx="7" cy="7.5" r="5.5" fill="#dedede" stroke="#9c9c9c" stroke-width="1.3" stroke-dasharray="2.5 1.2"/><circle cx="11" cy="11.5" r="3.5" fill="#a9a9a9"/></svg>
<svg class="a" style="left:128px;top:10px" width="7" height="4" viewBox="0 0 7 4"><path d="M0,0H7L3.5,4Z" fill="#333"/></svg>
<svg class="a" style="left:164px;top:10px" width="7" height="4" viewBox="0 0 7 4"><path d="M0,0H7L3.5,4Z" fill="#777"/></svg>
<svg class="a" style="left:200px;top:10px" width="7" height="4" viewBox="0 0 7 4"><path d="M0,0H7L3.5,4Z" fill="#777"/></svg>
<svg class="a" style="left:141px;top:5px" width="16" height="12" viewBox="0 0 16 12"><path d="M0.8,5.5L6,0.8V3.5H10Q15,3.5 15,8V11.3H12V8.5Q12,7 10,7H6V10Z" fill="#e3e3e3" stroke="#8c8c8c" stroke-width="1"/></svg>
<svg class="a" style="left:177px;top:5px" width="16" height="12" viewBox="0 0 16 12"><path d="M15.2,5.5L10,0.8V3.5H6Q1,3.5 1,8V11.3H4V8.5Q4,7 6,7H10V10Z" fill="#e3e3e3" stroke="#8c8c8c" stroke-width="1"/></svg>
<svg class="a" style="left:213px;top:5px" width="16" height="15" viewBox="0 0 16 15"><rect x="3.5" y="0.7" width="9" height="4" fill="#eee" stroke="#9c9c9c" stroke-width="1.1"/><rect x="0.7" y="4.5" width="14.6" height="6.5" rx="1" fill="#dcdcdc" stroke="#9c9c9c" stroke-width="1.2"/><rect x="3.5" y="9.5" width="9" height="4.5" fill="#f3f3f3" stroke="#9c9c9c" stroke-width="1.1"/></svg>
<div class="a" style="left:236px;top:2px;width:1px;height:20px;background:#bdbdbd;"></div>
<svg class="a" style="left:243px;top:6px" width="17" height="11" viewBox="0 0 17 11"><path d="M1,3.5H16M1,3.5L4,1M1,3.5L4,6M16,3.5L13,1M16,3.5L13,6" stroke="#8a8a8a" stroke-width="1.3" fill="none"/><rect x="1" y="7.5" width="15" height="3" fill="#b8b8b8" stroke="#8a8a8a" stroke-width="0.8"/></svg>
<svg class="a" style="left:267px;top:10px" width="7" height="4" viewBox="0 0 7 4"><path d="M0,0H7L3.5,4Z" fill="#333"/></svg>
<svg class="a" style="left:280px;top:4px" width="16" height="16" viewBox="0 0 16 16"><path d="M2,14L14,2M1,11.5L4.5,15M11.5,1L15,4.5M2,14L3,10.5M2,14L5.5,13M14,2L10.5,3M14,2L13,5.5" stroke="#8a8a8a" stroke-width="1.2" fill="none"/></svg>
<svg class="a" style="left:304px;top:4px" width="16" height="16" viewBox="0 0 16 16"><path d="M2,15V8M2,8H5" stroke="#8a8a8a" stroke-width="1"/><rect x="0.5" y="13.5" width="3" height="3" fill="none" stroke="#8a8a8a"/><path d="M6,6L9.5,2.5H14L15.5,6L14,10H9.5Z" fill="#eee" stroke="#8a8a8a" stroke-width="1"/><text x="10" y="9" font-family="Liberation Sans" font-size="6.5" fill="#777">1</text></svg>
<svg class="a" style="left:328px;top:4px" width="15" height="15" viewBox="0 0 15 15"><path d="M0.5,14.5L6,0.8H9L14.5,14.5H11.3L10,11H5L3.7,14.5ZM6,8.2H9L7.5,4Z" fill="#8f8f8f" fill-rule="evenodd"/></svg>
<div class="a" style="left:351.5px;top:2px;width:1px;height:20px;background:#bdbdbd;"></div>
<svg class="a" style="left:358px;top:4px" width="16" height="16" viewBox="0 0 16 16"><path d="M1,7L8,1.5L15,6V12L8,15.5L1,12Z" fill="#dcdcdc" stroke="#8e8e8e" stroke-width="1.1"/><path d="M1,7L8,10.5L15,6M8,10.5V15.5" stroke="#8e8e8e" stroke-width="1" fill="none"/><rect x="3" y="10" width="2" height="3" fill="#888"/></svg>
<svg class="a" style="left:381px;top:10px" width="7" height="4" viewBox="0 0 7 4"><path d="M0,0H7L3.5,4Z" fill="#333"/></svg>
<svg class="a" style="left:395px;top:4px" width="14" height="16" viewBox="0 0 14 16"><circle cx="6.5" cy="7" r="5" fill="#eee" stroke="#8e8e8e" stroke-width="1.2"/><path d="M9,4L13.5,7L9,10Z" fill="#777"/><path d="M6.5,12V15.5" stroke="#8e8e8e"/></svg>
<div class="a" style="left:415px;top:1px;width:24px;height:22px;background:#c4def5;border:1px solid #4d8bc6;"></div>
<svg class="a" style="left:419px;top:5px" width="17" height="14" viewBox="0 0 17 14"><rect x="1" y="1.5" width="5.5" height="2.5" fill="#5a6f87"/><rect x="1" y="6" width="5.5" height="2.5" fill="#5a6f87"/><rect x="1" y="10.5" width="3" height="2" fill="#5a6f87"/><path d="M6,13L11,1M10,2.5H16M9,7H15M6.5,12H16" stroke="#33485f" stroke-width="0.9"/></svg>
<svg class="a" style="left:450px;top:4px" width="16" height="17" viewBox="0 0 16 17"><rect x="1" y="1" width="6" height="6" fill="#e6e6e6" stroke="#a4a4a4"/><rect x="9" y="1" width="6" height="15" fill="#e6e6e6" stroke="#a4a4a4" stroke-dasharray="1.5 1"/><path d="M10,10L15,15M15,10L10,15" stroke="#8e8e8e" stroke-width="1.6"/><rect x="1" y="9" width="6" height="6" fill="#e6e6e6" stroke="#a4a4a4"/></svg>
<svg class="a" style="left:473px;top:4px" width="18" height="17" viewBox="0 0 18 17"><rect x="1" y="1.5" width="10" height="6" fill="#eee" stroke="#8e8e8e" stroke-width="1.1"/><rect x="6" y="9" width="11" height="7" fill="#eee" stroke="#8e8e8e" stroke-width="1.1"/><path d="M13,1V6M11.5,2.5L13,1L14.5,2.5M2,10V15H4" stroke="#777" fill="none"/></svg>
<svg class="a" style="left:495px;top:10px" width="7" height="4" viewBox="0 0 7 4"><path d="M0,0H7L3.5,4Z" fill="#333"/></svg>
<svg class="a" style="left:508px;top:8px" width="9" height="7" viewBox="0 0 9 7"><path d="M0.5,0.8H8.5" stroke="#444" stroke-width="1.2"/><path d="M0.5,3H8.5L4.5,6.5Z" fill="#444"/></svg>
<svg class="a" style="left:728px;top:34px" width="17" height="11" viewBox="0 0 17 11"><rect x="0.6" y="0.6" width="15.8" height="9.8" rx="4.9" fill="#f4f4f4" stroke="#555" stroke-width="1.1"/><path d="M5,7L8.5,3.5L12,7Z" fill="#333"/></svg>
<svg class="a" style="left:747px;top:38px" width="7" height="4" viewBox="0 0 7 4"><path d="M0,0H7L3.5,4Z" fill="#333"/></svg>
<svg class="a" style="left:1376px;top:7px" width="5" height="7" viewBox="0 0 5 7"><path d="M0.5,0.5L4.5,3.5L0.5,6.5Z" fill="#222"/></svg>
<svg class="a" style="left:1570px;top:4px" width="17" height="16" viewBox="0 0 17 16"><path d="M2,6V14.5H7V6L6,2H3ZM10,6V14.5H15V6L14,2H11Z" fill="#fff" stroke="#222" stroke-width="1.2"/><path d="M7,8H10" stroke="#222" stroke-width="1.5"/></svg>
<svg class="a" style="left:1595px;top:4px" width="14" height="16" viewBox="0 0 14 16"><path d="M2,12A6,6 0 0 1 10,3Z" fill="#fff" stroke="#222" stroke-width="1.1"/><path d="M6,8L12,1M4,15L6,10L8,15Z" stroke="#222" fill="none" stroke-width="1.1"/></svg>
<svg class="a" style="left:1617px;top:3px" width="17" height="17" viewBox="0 0 17 17"><path d="M8.5,1L10.6,6.3L16,6.6L11.8,10.1L13.2,15.5L8.5,12.5L3.8,15.5L5.2,10.1L1,6.6L6.4,6.3Z" fill="#fff" stroke="#222" stroke-width="1.1"/></svg>
<svg class="a" style="left:1642px;top:3px" width="17" height="17" viewBox="0 0 17 17"><defs><linearGradient id="ug" x1="0" y1="0" x2="0" y2="1"><stop offset="0" stop-color="#7aa7e6"/><stop offset="1" stop-color="#2a62c2"/></linearGradient></defs><path d="M8.5,1Q12.5,1 12.5,6Q12.5,9.5 10.5,11L16,13.5V16H1V13.5L6.5,11Q4.5,9.5 4.5,6Q4.5,1 8.5,1Z" fill="url(#ug)" stroke="#1e3f7a" stroke-width="0.9"/></svg>
<svg class="a" style="left:1747px;top:10px" width="7" height="4" viewBox="0 0 7 4"><path d="M0,0H7L3.5,4Z" fill="#333"/></svg>
<svg class="a" style="left:1763px;top:4px" width="18" height="15" viewBox="0 0 18 15"><path d="M0.5,1.5H3.5L6,10.5H15.5L17,4H4.5" fill="#fff" stroke="#1e3f7a" stroke-width="1.2"/><circle cx="7" cy="13" r="1.5" fill="#1e3f7a"/><circle cx="14" cy="13" r="1.5" fill="#1e3f7a"/></svg>
<div class="a" style="left:1789.5px;top:2px;width:1px;height:19px;background:#c2c2c2;"></div>
<svg class="a" style="left:1798px;top:3px" width="17" height="17" viewBox="0 0 17 17"><circle cx="8.5" cy="8.5" r="7.5" fill="#fff" stroke="#1e3f7a" stroke-width="1.2"/><text x="4.8" y="13.5" font-family="Liberation Sans" font-weight="bold" font-size="12" fill="#1e3f7a">?</text></svg>
<svg class="a" style="left:1821px;top:10px" width="7" height="4" viewBox="0 0 7 4"><path d="M0,0H7L3.5,4Z" fill="#333"/></svg>
<div class="a" style="left:1853.5px;top:16px;width:9px;height:1.8px;background:#111;"></div>
<svg class="a" style="left:1876px;top:6px" width="14" height="13" viewBox="0 0 14 13"><rect x="1" y="4.5" width="8.5" height="7.5" fill="none" stroke="#111" stroke-width="1.3"/><path d="M4,4.5V1.5H12.5V9H9.5" fill="none" stroke="#111" stroke-width="1.3"/></svg>
<svg class="a" style="left:1902px;top:5px" width="13" height="13" viewBox="0 0 13 13"><path d="M1,1L12,12M12,1L1,12" stroke="#111" stroke-width="1.4"/></svg>
<svg class="a" style="left:20px;top:59px" width="17" height="22" viewBox="0 0 17 22"><path d="M3,1V17L7,13L10,20L12.5,19L9.5,12H15Z" fill="#f4f4f4" stroke="#bcbcbc" stroke-width="1.2"/></svg>
<svg class="a" style="left:63px;top:55px" width="32" height="32" viewBox="0 0 32 32"><rect x="1" y="1" width="13" height="13" rx="3" fill="#e3e3e3" stroke="#bcbcbc"/><rect x="13" y="1" width="13" height="13" fill="#e3e3e3" stroke="#bcbcbc"/><rect x="1" y="15" width="13" height="13" rx="2" fill="#e3e3e3" stroke="#bcbcbc"/><rect x="17" y="11" width="13" height="18" fill="#f3f3f3" stroke="#bcbcbc"/><rect x="19" y="13" width="5" height="4" fill="#d6d6d6"/><path d="M19,21H28M19,25H28" stroke="#bcbcbc"/></svg>
<svg class="a" style="left:102px;top:54px" width="32" height="32" viewBox="0 0 32 32"><rect x="1" y="1" width="14" height="14" fill="#e3e3e3" stroke="#bcbcbc"/><rect x="17" y="1" width="8" height="23" fill="#e3e3e3" stroke="#bcbcbc"/><rect x="1" y="17" width="14" height="7" fill="#f3f3f3" stroke="#bcbcbc"/><rect x="17" y="19" width="14" height="11" fill="#d6d6d6" stroke="#bcbcbc"/></svg>
<div class="a" style="left:60px;top:89px;width:38px;height:34px;background:#c9e0f5;border:1px solid #6ea5da;"></div>
<svg class="a" style="left:67px;top:91px" width="22" height="30" viewBox="0 0 22 30"><rect x="1" y="1" width="20" height="28" fill="#dde6ee" stroke="#8aa4ba"/><rect x="3" y="4" width="10" height="9" fill="#8c9fb1"/><rect x="14" y="4" width="4" height="9" fill="#b6c5d2"/><path d="M3,19H18M3,24H18M7,17V21M14,22V26" stroke="#6d8399" stroke-width="1.1"/></svg>
<svg class="a" style="left:102px;top:91px" width="32" height="32" viewBox="0 0 32 32"><rect x="1" y="1" width="14" height="14" fill="#e3e3e3" stroke="#bcbcbc"/><rect x="17" y="1" width="8" height="15" fill="#e3e3e3" stroke="#bcbcbc"/><rect x="1" y="17" width="14" height="7" fill="#f3f3f3" stroke="#bcbcbc"/><rect x="16" y="15" width="7" height="7" fill="#d6d6d6" stroke="#bcbcbc"/><rect x="24" y="15" width="7" height="7" fill="#d6d6d6" stroke="#bcbcbc"/><rect x="16" y="23" width="7" height="7" fill="#d6d6d6" stroke="#bcbcbc"/><rect x="24" y="23" width="7" height="7" fill="#d6d6d6" stroke="#bcbcbc"/></svg>
<svg class="a" style="left:156px;top:56px" width="32" height="32" viewBox="0 0 32 32"><path d="M5,6L10,1H23V23L18,28H5Z" fill="#e3e3e3" stroke="#bcbcbc"/><path d="M5,6H18V28M18,6L23,1" stroke="#bcbcbc" fill="none"/><path d="M8,8V26M11,8V26M14,8V26" stroke="#d0d0d0"/></svg>
<svg class="a" style="left:201px;top:55px" width="32" height="32" viewBox="0 0 32 32"><path d="M8,5Q16,-1 24,5L31,22L18,30L1,22Z" fill="#e3e3e3" stroke="#bcbcbc"/><ellipse cx="16" cy="5" rx="8" ry="3.5" fill="#eee" stroke="#bcbcbc"/></svg>
<svg class="a" style="left:242px;top:55px" width="32" height="32" viewBox="0 0 32 32"><path d="M2,14V24L14,30L30,24V14" fill="#d6d6d6" stroke="#bcbcbc"/><ellipse cx="16" cy="14" rx="14" ry="6" fill="#e3e3e3" stroke="#bcbcbc"/><path d="M16,2V30" stroke="#aaa" stroke-dasharray="2 1.5"/><path d="M4,6Q16,-2 28,5M4,6L7,3M4,6L8,8" stroke="#bcbcbc" fill="none"/></svg>
<svg class="a" style="left:288px;top:55px" width="32" height="32" viewBox="0 0 32 32"><path d="M8,1H19V8H30V22L26,27H19V16H8L2,21V10Z" fill="#e3e3e3" stroke="#bcbcbc"/><rect x="10" y="19" width="10" height="11" fill="#f0f0f0" stroke="#bcbcbc"/></svg>
<svg class="a" style="left:327px;top:55px" width="32" height="32" viewBox="0 0 32 32"><path d="M1,1L7,6V29L1,24Z" fill="#eee" stroke="#bcbcbc"/><path d="M1,1Q22,1 30,22L24,26Q18,8 7,6Z" fill="#d6d6d6" stroke="#bcbcbc"/><circle cx="25" cy="24" r="5" fill="#f3f3f3" stroke="#bcbcbc"/></svg>
<svg class="a" style="left:371px;top:55px" width="32" height="32" viewBox="0 0 32 32"><path d="M1,8L8,1H30V23L23,30H1Z" fill="none" stroke="#bcbcbc"/><path d="M1,8H23V30M23,8L30,1" stroke="#bcbcbc" fill="none"/><path d="M8,1V23H30M1,30L8,23" stroke="#d0d0d0" fill="none"/></svg>
<svg class="a" style="left:423px;top:55px" width="32" height="32" viewBox="0 0 32 32"><path d="M3,2V28M7,2Q8,24 28,28" stroke="#bcbcbc" fill="none"/><rect x="1.5" y="1" width="3" height="3" fill="#fff" stroke="#bcbcbc"/><rect x="1.5" y="26" width="3" height="3" fill="#fff" stroke="#bcbcbc"/><rect x="5.5" y="1" width="3" height="3" fill="#fff" stroke="#bcbcbc"/><rect x="26" y="26.5" width="3" height="3" fill="#fff" stroke="#bcbcbc"/></svg>
<svg class="a" style="left:478px;top:55px" width="32" height="32" viewBox="0 0 32 32"><path d="M1,6L6,1H14V10H8V18H28V28H1Z" fill="#eee" stroke="#bcbcbc"/><path d="M14,1H24L29,6V23L24,28V18" fill="#d6d6d6" stroke="#bcbcbc"/><path d="M8,18L1,22" stroke="#bcbcbc"/></svg>
<svg class="a" style="left:534px;top:56px" width="32" height="32" viewBox="0 0 32 32"><path d="M1,28L11,2H19L30,28H23L20,20H11L8,28ZM12.5,15H18.5L15.5,7Z" fill="#f0f0f0" stroke="#bcbcbc" fill-rule="evenodd"/><path d="M19,2L23,5L31,27L30,28" stroke="#bcbcbc" fill="#d6d6d6"/></svg>
<svg class="a" style="left:580px;top:57px" width="32" height="32" viewBox="0 0 32 32"><rect x="1" y="1" width="29" height="24" fill="#e3e3e3" stroke="#bcbcbc"/><rect x="5" y="8" width="20" height="12" fill="#f1f1f1" stroke="#bcbcbc"/></svg>
<svg class="a" style="left:631px;top:55px" width="32" height="32" viewBox="0 0 32 32"><path d="M5,1H1V29H5M26,1H30V29H26" stroke="#bcbcbc" fill="none"/><circle cx="12" cy="11" r="6.5" fill="#e3e3e3" stroke="#bcbcbc"/><rect x="11" y="11" width="13" height="13" rx="2" fill="#eee" stroke="#bcbcbc"/></svg>
<svg class="a" style="left:686px;top:56px" width="32" height="32" viewBox="0 0 32 32"><path d="M15,1V29" stroke="#c4c4c4" stroke-dasharray="2 1.5"/><path d="M17,9H29M29,9L26,6M29,9L26,12M13,17H1M1,17L4,14M1,17L4,20" stroke="#cacaca" stroke-width="1.4" fill="none"/></svg>
<svg class="a" style="left:745px;top:56px" width="32" height="32" viewBox="0 0 32 32"><rect x="5" y="3" width="7" height="16" rx="3" transform="rotate(-40 8 11)" fill="#e3e3e3" stroke="#bcbcbc"/><path d="M14,4L26,16M14,17L18,28M17,17L24,26" stroke="#bcbcbc" fill="none"/><circle cx="9" cy="14" r="3.5" fill="#cfcfcf" stroke="#bcbcbc"/><path d="M9,18V23H1" stroke="#bcbcbc" fill="none"/></svg>
<svg class="a" style="left:808px;top:56px" width="32" height="32" viewBox="0 0 32 32"><path d="M1,8L6,1H30V19L25,26H1Z" fill="#e3e3e3" stroke="#bcbcbc"/><rect x="3" y="11" width="19" height="10" fill="#eee" stroke="#bcbcbc"/><path d="M3,14H11V11" stroke="#bcbcbc" fill="none"/><circle cx="24" cy="18" r="3.5" fill="#cfcfcf" stroke="#bcbcbc"/><path d="M24,22V28H14" stroke="#bcbcbc" fill="none"/></svg>
<svg class="a" style="left:871px;top:55px" width="32" height="32" viewBox="0 0 32 32"><rect x="1" y="12" width="24" height="9" rx="4" fill="#e3e3e3" stroke="#bcbcbc"/><rect x="6" y="1" width="9" height="24" rx="4" transform="rotate(-45 10 12)" fill="#ececec" stroke="#bcbcbc"/><circle cx="24" cy="18" r="3.5" fill="#cfcfcf" stroke="#bcbcbc"/><path d="M24,22V28H14" stroke="#bcbcbc" fill="none"/></svg>
<svg class="a" style="left:933px;top:57px" width="32" height="32" viewBox="0 0 32 32"><path d="M1,22L10,11H13V22M17,22L26,11H29V22" stroke="#bcbcbc" fill="#e3e3e3"/><path d="M1,22H14M17,22H28" stroke="#bcbcbc"/><circle cx="24" cy="18" r="3.5" fill="#cfcfcf" stroke="#bcbcbc"/><path d="M24,22V28H14" stroke="#bcbcbc" fill="none"/></svg>
<svg class="a" style="left:995px;top:58px" width="32" height="32" viewBox="0 0 32 32"><rect x="1" y="3" width="26" height="12" rx="4" fill="#e3e3e3" stroke="#bcbcbc"/><path d="M5,3V15M8,3V15M11,3V15M14,3V15M17,3V15M20,3V15" stroke="#bcbcbc"/><circle cx="24" cy="18" r="3.5" fill="#cfcfcf" stroke="#bcbcbc"/><path d="M24,22V28H14" stroke="#bcbcbc" fill="none"/></svg>
<svg class="a" style="left:1062px;top:55px" width="32" height="32" viewBox="0 0 32 32"><path d="M3,2V28M8,2Q9,24 28,28" stroke="#b4b4b4" stroke-dasharray="2 1.6" fill="none"/><rect x="1.5" y="1" width="3" height="3" fill="#fff" stroke="#bbb"/><rect x="6.5" y="1" width="3" height="3" fill="#fff" stroke="#bbb"/><rect x="1.5" y="26" width="3" height="3" fill="#fff" stroke="#bbb"/><rect x="26" y="26" width="3" height="3" fill="#fff" stroke="#bbb"/></svg>
<svg class="a" style="left:1121px;top:55px" width="32" height="32" viewBox="0 0 32 32"><path d="M9,2H29L21,24H1Z" fill="#e3e3e3" stroke="#bcbcbc"/><path d="M18,28L28,17L31,20L21,30L17,31Z" fill="#f3f3f3" stroke="#bcbcbc"/></svg>
<svg class="a" style="left:1174px;top:56px" width="32" height="32" viewBox="0 0 32 32"><path d="M5,8L27,2V22L5,28Z" fill="#e3e3e3" stroke="#bcbcbc"/><path d="M5,14L27,9M5,21L27,15M11,6V27M17,4V25M22,3V24" stroke="#bcbcbc"/><path d="M1,12L5,8V28L1,24Z" fill="#eee" stroke="#bcbcbc"/></svg>
<svg class="a" style="left:1213px;top:56px" width="32" height="32" viewBox="0 0 32 32"><path d="M1,8L22,2V24L1,28Z" fill="#eee" stroke="#bcbcbc"/><path d="M1,15L22,10M1,21L22,17M8,6V27M15,4V26" stroke="#bcbcbc"/><circle cx="22" cy="19" r="6" fill="#f3f3f3" stroke="#bcbcbc"/><rect x="19.5" y="25" width="5" height="4" fill="#d6d6d6"/></svg>
<svg class="a" style="left:1252px;top:55px" width="32" height="32" viewBox="0 0 32 32"><rect x="1" y="1" width="28" height="28" fill="#f3f3f3" stroke="#bcbcbc"/><rect x="1" y="1" width="28" height="2.5" fill="#d6d6d6"/><path d="M7,14L12,10H22V20L17,24H7Z" fill="#d6d6d6" stroke="#bcbcbc"/><path d="M22,1L30,10L26,10L28,15L26,16L24,11L21,13Z" fill="#fff" stroke="#bcbcbc"/></svg>
<svg class="a" style="left:1306px;top:55px" width="32" height="32" viewBox="0 0 32 32"><path d="M1,10H9V21H18V4H27V29H1Z" fill="#f3f3f3" stroke="#bcbcbc"/><path d="M9,15V7H5L11,1L17,7H13V15Z" fill="#d6d6d6" stroke="#bcbcbc"/></svg>
<svg class="a" style="left:1382px;top:55px" width="32" height="32" viewBox="0 0 32 32"><path d="M1,10H9V19H18V4H22V25H1Z" fill="#f3f3f3" stroke="#bcbcbc"/><path d="M9,15V7H5L11,1L17,7H13V15Z" fill="#d6d6d6" stroke="#bcbcbc"/><rect x="19" y="19" width="12" height="12" rx="2" fill="#cfcfcf" stroke="#bcbcbc"/><path d="M22,22L28,28M28,22L22,28" stroke="#f2f2f2" stroke-width="1.5"/></svg>
<svg class="a" style="left:4px;top:175px" width="16" height="16" viewBox="0 0 16 16"><path d="M1.5,8L5,2.5L14,4.5L10.5,10Z" fill="#f4f4f4" stroke="#9a9a9a" stroke-width="1"/><path d="M2.5,8V13.5L9.5,15V9.5Z" fill="#e8e8e8" stroke="#9a9a9a" stroke-width="1"/><path d="M9.5,9.5L14,5V11L9.5,15Z" fill="#c4cbd1" stroke="#9a9a9a" stroke-width="1"/><rect x="4" y="10" width="2" height="4" fill="#9a9a9a"/></svg>
<svg class="a" style="left:131px;top:175px" width="16" height="16" viewBox="0 0 16 16"><path d="M1.5,8L5,2.5L14,4.5L10.5,10Z" fill="#f4f4f4" stroke="#9a9a9a" stroke-width="1"/><path d="M2.5,8V13.5L9.5,15V9.5Z" fill="#e8e8e8" stroke="#9a9a9a" stroke-width="1"/><path d="M9.5,9.5L14,5V11L9.5,15Z" fill="#c4cbd1" stroke="#9a9a9a" stroke-width="1"/><rect x="4" y="10" width="2" height="4" fill="#9a9a9a"/></svg>
<svg class="a" style="left:259px;top:175px" width="16" height="16" viewBox="0 0 16 16"><path d="M1.5,8L5,2.5L14,4.5L10.5,10Z" fill="#f4f4f4" stroke="#3a3a3a" stroke-width="1"/><path d="M2.5,8V13.5L9.5,15V9.5Z" fill="#e8e8e8" stroke="#3a3a3a" stroke-width="1"/><path d="M9.5,9.5L14,5V11L9.5,15Z" fill="#c4cbd1" stroke="#3a3a3a" stroke-width="1"/><rect x="4" y="10" width="2" height="4" fill="#3a3a3a"/></svg>
<svg class="a" style="left:80px;top:998px" width="16" height="14" viewBox="0 0 16 14"><rect x="0.5" y="0.5" width="15" height="10" fill="#fff" stroke="#333"/><g fill="#777"><rect x="2" y="2" width="2" height="2"/><rect x="6" y="2" width="2" height="2"/><rect x="10" y="2" width="2" height="2"/><rect x="4" y="4" width="2" height="2"/><rect x="8" y="4" width="2" height="2"/><rect x="12" y="4" width="2" height="2"/><rect x="2" y="6" width="2" height="2"/><rect x="6" y="6" width="2" height="2"/><rect x="10" y="6" width="2" height="2"/><rect x="4" y="8" width="2" height="1.5"/><rect x="8" y="8" width="2" height="1.5"/><rect x="12" y="8" width="2" height="1.5"/></g></svg>
<svg class="a" style="left:101px;top:998px" width="16" height="14" viewBox="0 0 16 14"><path d="M1,5L4,1.5H15V9L11.5,12.5H1Z" fill="#9fd0f2" stroke="#2b6a9a"/><path d="M1,5H11.5V12.5M11.5,5L15,1.5" stroke="#2b6a9a" fill="none"/></svg>
<svg class="a" style="left:121px;top:998px" width="16" height="14" viewBox="0 0 16 14"><path d="M1,8H3M3,4H12V10M3,4V12M3,7H9" stroke="#2b6a9a" stroke-width="1.4" fill="none"/><path d="M9,8L15,13M15,8L9,13" stroke="#c0282d" stroke-width="2"/></svg>
<svg class="a" style="left:142px;top:998px" width="16" height="14" viewBox="0 0 16 14"><path d="M1,8H3M3,4H12V6M3,4V12M3,7H8M3,10H8" stroke="#2b6a9a" stroke-width="1.4" fill="none"/><circle cx="12.5" cy="9" r="2.5" fill="#fff" stroke="#2b6a9a"/></svg>
<svg class="a" style="left:163px;top:998px" width="16" height="14" viewBox="0 0 16 14"><path d="M1.5,6L7,1.5L12.5,6V12.5H1.5Z" fill="#fff" stroke="#333" stroke-width="1.1"/><rect x="8.5" y="8.5" width="7" height="5" fill="#fff" stroke="#2e7d6b"/></svg>
<svg class="a" style="left:184px;top:998px" width="16" height="14" viewBox="0 0 16 14"><path d="M1,6Q4,11 7,8T15,5" stroke="#333" fill="none" stroke-width="1.2"/><circle cx="11" cy="6" r="3.5" fill="none" stroke="#333"/></svg>
<svg class="a" style="left:205px;top:998px" width="16" height="14" viewBox="0 0 16 14"><path d="M1,1V13M15,1V13M1,3H15" stroke="#333"/><path d="M1,10H9" stroke="#333" stroke-dasharray="1.5 1"/><rect x="9" y="7" width="6" height="5" fill="#888"/></svg>
<svg class="a" style="left:226px;top:998px" width="16" height="14" viewBox="0 0 16 14"><rect x="1" y="2" width="14" height="4" fill="#fff" stroke="#333"/><rect x="1" y="8" width="10" height="4" fill="#fff" stroke="#333"/><circle cx="13" cy="10" r="2.5" fill="#cde" stroke="#2b6a9a"/></svg>
<svg class="a" style="left:250px;top:998px" width="16" height="14" viewBox="0 0 16 14"><path d="M6,2L2,7L6,12" stroke="#333" stroke-width="1.6" fill="none"/></svg>
<div class="a" style="left:1903px;top:193px;width:17px;height:804px;background:#f0f0f0;"></div>
<svg class="a" style="left:1906px;top:178px" width="12" height="10" viewBox="0 0 12 10"><path d="M2,2.2H10" stroke="#333" stroke-width="1.3"/><path d="M1.5,5H10.5L6,9Z" fill="#333"/></svg>
<svg class="a" style="left:1906px;top:199px" width="12" height="10" viewBox="0 0 12 10"><path d="M2.5,7.5L6,4L9.5,7.5" stroke="#444" stroke-width="2" fill="none"/></svg>
<svg class="a" style="left:1906px;top:984px" width="12" height="10" viewBox="0 0 12 10"><path d="M2.5,3L6,6.5L9.5,3" stroke="#444" stroke-width="2" fill="none"/></svg>
<div class="a" style="left:1904px;top:588px;width:15px;height:17px;background:#cdcdcd;"></div>
<svg class="a" style="left:1888px;top:999px" width="12" height="12" viewBox="0 0 12 12"><path d="M3,1L8,6L3,11" stroke="#333" stroke-width="1.4" fill="none"/></svg>
<div class="a" style="left:1067px;top:998px;width:16px;height:15px;background:#d6d6d6;"></div>
<svg class="a" style="left:1906px;top:1002px" width="12" height="12" viewBox="0 0 12 12"><g fill="#b0b0b0"><rect x="9" y="1" width="2" height="2"/><rect x="6" y="4" width="2" height="2"/><rect x="9" y="4" width="2" height="2"/><rect x="3" y="7" width="2" height="2"/><rect x="6" y="7" width="2" height="2"/><rect x="9" y="7" width="2" height="2"/></g></svg>
<svg class="a" style="left:1668px;top:1021px" width="16" height="17" viewBox="0 0 16 17"><circle cx="4" cy="5" r="3.2" fill="#8c8c8c"/><circle cx="12" cy="5" r="3.2" fill="#8c8c8c"/><circle cx="8" cy="4" r="3" fill="#8c8c8c"/><path d="M5,7H11V11L9.5,12V15H6.5V12L5,11Z" fill="#8c8c8c"/><path d="M12,10H15M12,13H15" stroke="#fff" stroke-dasharray="1 1"/></svg>
<svg class="a" style="left:1694px;top:1021px" width="16" height="17" viewBox="0 0 16 17"><path d="M1,14L8,4H13V14Z" fill="#8c8c8c"/><path d="M3,15H13" stroke="#8c8c8c"/><path d="M14,3V15" stroke="#fff" stroke-dasharray="1.2 1.2"/></svg>
<svg class="a" style="left:1720px;top:1021px" width="16" height="17" viewBox="0 0 16 17"><path d="M1,1H10L11,6L15,10V13H8L7,10H1Z" fill="#8c8c8c"/><path d="M2,5H7M5,13H14" stroke="#fff" stroke-dasharray="1.2 1"/></svg>
<svg class="a" style="left:1747px;top:1021px" width="16" height="17" viewBox="0 0 16 17"><path d="M1,3L10,1L12,10L14,12V14H1Z" fill="#8c8c8c"/><path d="M1,14H14M12,2V8" stroke="#fff" stroke-dasharray="1.2 1"/></svg>
<svg class="a" style="left:1773px;top:1021px" width="16" height="17" viewBox="0 0 16 17"><path d="M1,4H7M4,1V7M4,9V11" stroke="#8c8c8c" stroke-width="1.3"/><path d="M8,5V15L10.5,12.5L12.5,16L14,15L12,11.5H15Z" fill="#fff" stroke="#8c8c8c" stroke-width="1"/></svg>
<svg class="a" style="left:1798px;top:1021px" width="16" height="17" viewBox="0 0 16 17"><circle cx="7" cy="7.5" r="5.5" fill="none" stroke="#a3a3a3" stroke-width="2.4" stroke-dasharray="1.8 1.6"/></svg>
<svg class="a" style="left:1821px;top:1021px" width="16" height="17" viewBox="0 0 16 17"><defs><linearGradient id="fg" x1="0" y1="0" x2="1" y2="1"><stop offset="0" stop-color="#f0f3f6"/><stop offset="1" stop-color="#8795a3"/></linearGradient></defs><path d="M0.8,1.2H15.2L10,7.5V14.2H6V7.5Z" fill="url(#fg)" stroke="#3a3a3a" stroke-width="1.2" stroke-linejoin="round"/></svg>
<span id="f1" class="t" style="left:1838.00px;top:1023.10px;font-size:11.7px;color:#333;">:0</span>

<div class="a" style="left:1098px;top:204px;width:805px;height:773px;background:#f0f0f0;border:1px solid #6b6b6b;box-shadow:0 2px 14px rgba(0,0,0,0.28);"></div>
<div class="a" style="left:1099px;top:205px;width:803px;height:30px;background:#ffffff;"></div>
<span id="d1" class="t" style="transform:scaleX(0.9366);left:1107.30px;top:213.59px;font-size:12px;color:#000;">Family Types</span>
<svg class="a" style="left:1881px;top:213px;" width="12" height="12" viewBox="0 0 12 12"><path d="M1,1L11,11M11,1L1,11" stroke="#111" stroke-width="1.2"/></svg>
<span id="d2" class="t" style="transform:scaleX(0.9509);left:1110.10px;top:253.02px;font-size:11.2px;color:#000;">Type name:</span>
<div class="a" style="left:1180px;top:248px;width:617.5px;height:20.5px;background:#cccccc;"></div>
<svg class="a" style="left:1782px;top:254px;" width="12" height="8" viewBox="0 0 12 8"><path d="M1,1.5L6,6.5L11,1.5" stroke="#a9a9a9" fill="none" stroke-width="1"/></svg>
<svg class="a" style="left:1808px;top:249px;" width="18" height="19" viewBox="0 0 18 19"><path d="M4.5,6.5H10L13,9.5V17H4.5Z" fill="#e6edf5" stroke="#3a3a3a" stroke-width="1.2"/><path d="M10,6.5V9.5H13" fill="#fff" stroke="#3a3a3a" stroke-width="1"/><g stroke="#f29a1a" stroke-width="1.2"><path d="M3.5,1V7.5M0.5,4.2H6.5M1.3,2L5.7,6.5M5.7,2L1.3,6.5"/></g></svg>
<svg class="a" style="left:1837px;top:251px;" width="18" height="16" viewBox="0 0 18 16"><rect x="1.5" y="1.5" width="15" height="12" fill="#fff" stroke="#8a8a8a" stroke-width="1.2"/><path d="M3,3H11V12H3Z" fill="#9fb6c8"/><path d="M13.5,3.5V11.5M12,3.5H15M12,11.5H15" stroke="#777" stroke-width="1"/></svg>
<svg class="a" style="left:1868px;top:249px;" width="18" height="19" viewBox="0 0 18 19"><path d="M5,6.5H10L13,9.5V17H5Z" fill="#eef1f4" stroke="#8a8a8a" stroke-width="1.2"/><path d="M10,6.5V9.5H13" fill="#fff" stroke="#8a8a8a" stroke-width="1"/><path d="M0.8,1L6.8,7M6.8,1L0.8,7" stroke="#c98a92" stroke-width="1.8"/></svg>
<div class="a" style="left:1110px;top:281.5px;width:781.5px;height:19.5px;background:#ffffff;border:1px solid #7a7a7a;"></div>
<span id="d3" class="t" style="transform:scaleX(0.9352);left:1113.60px;top:284.35px;font-size:11.4px;color:#505050;">Search parameters</span>
<svg class="a" style="left:1872px;top:282px;" width="18" height="18" viewBox="0 0 18 18"><circle cx="7.5" cy="7" r="5.2" fill="#e3ecef" stroke="#333" stroke-width="1.2"/><path d="M11.2,10.8L16,15.6" stroke="#555" stroke-width="2.4"/></svg>
<div class="a" style="left:1111px;top:311px;width:778px;height:581px;background:#ffffff;border-left:2px solid #7d7d7d;border-top:1px solid #7d7d7d;"></div>
<div class="a" style="left:1113px;top:312px;width:776px;height:20px;background:#f0f0f0;"></div>
<div class="a" style="left:1112px;top:331.5px;width:778px;height:1.6px;background:#111;"></div>
<div class="a" style="left:1346px;top:312px;width:1.3px;height:20px;background:#111;"></div>
<div class="a" style="left:1582px;top:312px;width:1.3px;height:20px;background:#111;"></div>
<div class="a" style="left:1832px;top:312px;width:1.3px;height:20px;background:#111;"></div>
<div class="a" style="left:1888px;top:312px;width:1.3px;height:21px;background:#111;"></div>
<span id="d4" class="t" style="transform:scaleX(1.0147);left:1203.60px;top:316.42px;font-size:11.2px;color:#000;">Parameter</span>
<span id="d5" class="t" style="transform:scaleX(1.0505);left:1451.30px;top:316.42px;font-size:11.2px;color:#000;">Value</span>
<span id="d6" class="t" style="transform:scaleX(1.0553);left:1686.40px;top:316.42px;font-size:11.2px;color:#000;">Formula</span>
<span id="d7" class="t" style="transform:scaleX(1.0448);left:1849.40px;top:316.42px;font-size:11.2px;color:#000;">Lock</span>
<div class="a" style="left:1112px;top:336px;width:777px;height:18.5px;background:#97b2d1;"></div>
<span id="d8" class="t" style="transform:scaleX(0.9967);left:1114.60px;top:339.27px;font-size:11.2px;color:#0b1626;font-weight:bold;">Materials and Finishes</span>
<svg class="a" style="left:1876px;top:340.5px;" width="7" height="9" viewBox="0 0 7 9"><path d="M0.5,3.8L3.5,0.8L6.5,3.8M0.5,7.8L3.5,4.8L6.5,7.8" stroke="#111" fill="none" stroke-width="1.3"/></svg>
<span id="d9" class="t" style="left:1114.60px;top:357.85px;font-size:11.4px;color:#000;">Frame</span>
<span id="d10" class="t" style="left:1349.00px;top:357.85px;font-size:11.4px;color:#000;">Plast - Tmavy</span>
<span id="d11" class="t" style="left:1583.50px;top:357.85px;font-size:11.4px;color:#000;">=</span>
<div class="a" style="left:1112px;top:371.5px;width:777px;height:1px;background:transparent;background-image:linear-gradient(to right,#555 50%,transparent 50%);background-size:2px 1px;"></div>
<div class="a" style="left:1346px;top:354.5px;width:1px;height:18px;background:transparent;background-image:linear-gradient(to bottom,#555 50%,transparent 50%);background-size:1px 2px;"></div>
<div class="a" style="left:1582px;top:354.5px;width:1px;height:18px;background:transparent;background-image:linear-gradient(to bottom,#555 50%,transparent 50%);background-size:1px 2px;"></div>
<div class="a" style="left:1832px;top:354.5px;width:1px;height:18px;background:transparent;background-image:linear-gradient(to bottom,#555 50%,transparent 50%);background-size:1px 2px;"></div>
<div class="a" style="left:1888px;top:354.5px;width:1px;height:18px;background:transparent;background-image:linear-gradient(to bottom,#555 50%,transparent 50%);background-size:1px 2px;"></div>
<span id="d12" class="t" style="left:1114.60px;top:375.85px;font-size:11.4px;color:#000;">Trapez</span>
<span id="d13" class="t" style="left:1349.00px;top:375.85px;font-size:11.4px;color:#000;">plast</span>
<span id="d14" class="t" style="left:1583.50px;top:375.85px;font-size:11.4px;color:#000;">=</span>
<div class="a" style="left:1112px;top:389.5px;width:777px;height:1px;background:transparent;background-image:linear-gradient(to right,#555 50%,transparent 50%);background-size:2px 1px;"></div>
<div class="a" style="left:1346px;top:372.5px;width:1px;height:18px;background:transparent;background-image:linear-gradient(to bottom,#555 50%,transparent 50%);background-size:1px 2px;"></div>
<div class="a" style="left:1582px;top:372.5px;width:1px;height:18px;background:transparent;background-image:linear-gradient(to bottom,#555 50%,transparent 50%);background-size:1px 2px;"></div>
<div class="a" style="left:1832px;top:372.5px;width:1px;height:18px;background:transparent;background-image:linear-gradient(to bottom,#555 50%,transparent 50%);background-size:1px 2px;"></div>
<div class="a" style="left:1888px;top:372.5px;width:1px;height:18px;background:transparent;background-image:linear-gradient(to bottom,#555 50%,transparent 50%);background-size:1px 2px;"></div>
<div class="a" style="left:1112px;top:394px;width:777px;height:18.5px;background:#97b2d1;"></div>
<span id="d15" class="t" style="transform:scaleX(0.9949);left:1114.60px;top:397.27px;font-size:11.2px;color:#0b1626;font-weight:bold;">Dimensions</span>
<svg class="a" style="left:1876px;top:398.5px;" width="7" height="9" viewBox="0 0 7 9"><path d="M0.5,3.8L3.5,0.8L6.5,3.8M0.5,7.8L3.5,4.8L6.5,7.8" stroke="#111" fill="none" stroke-width="1.3"/></svg>
<span id="d16" class="t" style="left:1114.60px;top:415.85px;font-size:11.4px;color:#000;">W</span>
<span id="d17" class="t" style="left:1349.00px;top:415.85px;font-size:11.4px;color:#000;">4000.0</span>
<span id="d18" class="t" style="left:1583.50px;top:415.85px;font-size:11.4px;color:#000;">=</span>
<svg class="a" style="left:1835.5px;top:415.5px;" width="14" height="14" viewBox="0 0 14 14"><rect x="0.5" y="0.5" width="12.5" height="12.5" fill="#fff" stroke="#333" stroke-width="1"/></svg>
<div class="a" style="left:1112px;top:429.5px;width:777px;height:1px;background:transparent;background-image:linear-gradient(to right,#555 50%,transparent 50%);background-size:2px 1px;"></div>
<div class="a" style="left:1346px;top:412.5px;width:1px;height:18px;background:transparent;background-image:linear-gradient(to bottom,#555 50%,transparent 50%);background-size:1px 2px;"></div>
<div class="a" style="left:1582px;top:412.5px;width:1px;height:18px;background:transparent;background-image:linear-gradient(to bottom,#555 50%,transparent 50%);background-size:1px 2px;"></div>
<div class="a" style="left:1832px;top:412.5px;width:1px;height:18px;background:transparent;background-image:linear-gradient(to bottom,#555 50%,transparent 50%);background-size:1px 2px;"></div>
<div class="a" style="left:1888px;top:412.5px;width:1px;height:18px;background:transparent;background-image:linear-gradient(to bottom,#555 50%,transparent 50%);background-size:1px 2px;"></div>
<span id="d19" class="t" style="left:1114.60px;top:433.85px;font-size:11.4px;color:#000;">D</span>
<span id="d20" class="t" style="left:1349.00px;top:433.85px;font-size:11.4px;color:#000;">2500.0</span>
<span id="d21" class="t" style="left:1583.50px;top:433.85px;font-size:11.4px;color:#000;">=</span>
<svg class="a" style="left:1835.5px;top:433.5px;" width="14" height="14" viewBox="0 0 14 14"><rect x="0.5" y="0.5" width="12.5" height="12.5" fill="#fff" stroke="#333" stroke-width="1"/></svg>
<div class="a" style="left:1112px;top:447.5px;width:777px;height:1px;background:transparent;background-image:linear-gradient(to right,#555 50%,transparent 50%);background-size:2px 1px;"></div>
<div class="a" style="left:1346px;top:430.5px;width:1px;height:18px;background:transparent;background-image:linear-gradient(to bottom,#555 50%,transparent 50%);background-size:1px 2px;"></div>
<div class="a" style="left:1582px;top:430.5px;width:1px;height:18px;background:transparent;background-image:linear-gradient(to bottom,#555 50%,transparent 50%);background-size:1px 2px;"></div>
<div class="a" style="left:1832px;top:430.5px;width:1px;height:18px;background:transparent;background-image:linear-gradient(to bottom,#555 50%,transparent 50%);background-size:1px 2px;"></div>
<div class="a" style="left:1888px;top:430.5px;width:1px;height:18px;background:transparent;background-image:linear-gradient(to bottom,#555 50%,transparent 50%);background-size:1px 2px;"></div>
<span id="d22" class="t" style="left:1114.60px;top:451.85px;font-size:11.4px;color:#000;">H</span>
<span id="d23" class="t" style="left:1349.00px;top:451.85px;font-size:11.4px;color:#000;">2500.0</span>
<span id="d24" class="t" style="left:1583.50px;top:451.85px;font-size:11.4px;color:#000;">=</span>
<svg class="a" style="left:1835.5px;top:451.5px;" width="14" height="14" viewBox="0 0 14 14"><rect x="0.5" y="0.5" width="12.5" height="12.5" fill="#fff" stroke="#333" stroke-width="1"/></svg>
<div class="a" style="left:1112px;top:465.5px;width:777px;height:1px;background:transparent;background-image:linear-gradient(to right,#555 50%,transparent 50%);background-size:2px 1px;"></div>
<div class="a" style="left:1346px;top:448.5px;width:1px;height:18px;background:transparent;background-image:linear-gradient(to bottom,#555 50%,transparent 50%);background-size:1px 2px;"></div>
<div class="a" style="left:1582px;top:448.5px;width:1px;height:18px;background:transparent;background-image:linear-gradient(to bottom,#555 50%,transparent 50%);background-size:1px 2px;"></div>
<div class="a" style="left:1832px;top:448.5px;width:1px;height:18px;background:transparent;background-image:linear-gradient(to bottom,#555 50%,transparent 50%);background-size:1px 2px;"></div>
<div class="a" style="left:1888px;top:448.5px;width:1px;height:18px;background:transparent;background-image:linear-gradient(to bottom,#555 50%,transparent 50%);background-size:1px 2px;"></div>
<span id="d25" class="t" style="left:1114.60px;top:469.85px;font-size:11.4px;color:#000;">Thickness of trapez</span>
<span id="d26" class="t" style="left:1349.00px;top:469.85px;font-size:11.4px;color:#000;">10.0</span>
<span id="d27" class="t" style="left:1583.50px;top:469.85px;font-size:11.4px;color:#000;">=</span>
<svg class="a" style="left:1835.5px;top:469.5px;" width="14" height="14" viewBox="0 0 14 14"><rect x="0.5" y="0.5" width="12.5" height="12.5" fill="#fff" stroke="#333" stroke-width="1"/></svg>
<div class="a" style="left:1112px;top:483.5px;width:777px;height:1px;background:transparent;background-image:linear-gradient(to right,#555 50%,transparent 50%);background-size:2px 1px;"></div>
<div class="a" style="left:1346px;top:466.5px;width:1px;height:18px;background:transparent;background-image:linear-gradient(to bottom,#555 50%,transparent 50%);background-size:1px 2px;"></div>
<div class="a" style="left:1582px;top:466.5px;width:1px;height:18px;background:transparent;background-image:linear-gradient(to bottom,#555 50%,transparent 50%);background-size:1px 2px;"></div>
<div class="a" style="left:1832px;top:466.5px;width:1px;height:18px;background:transparent;background-image:linear-gradient(to bottom,#555 50%,transparent 50%);background-size:1px 2px;"></div>
<div class="a" style="left:1888px;top:466.5px;width:1px;height:18px;background:transparent;background-image:linear-gradient(to bottom,#555 50%,transparent 50%);background-size:1px 2px;"></div>
<span id="d28" class="t" style="left:1114.60px;top:487.85px;font-size:11.4px;color:#000;">D of trapez</span>
<span id="d29" class="t" style="left:1349.00px;top:487.85px;font-size:11.4px;color:#000;">20.0</span>
<span id="d30" class="t" style="left:1583.50px;top:487.85px;font-size:11.4px;color:#000;">=</span>
<svg class="a" style="left:1835.5px;top:487.5px;" width="14" height="14" viewBox="0 0 14 14"><rect x="0.5" y="0.5" width="12.5" height="12.5" fill="#fff" stroke="#333" stroke-width="1"/></svg>
<div class="a" style="left:1112px;top:501.5px;width:777px;height:1px;background:transparent;background-image:linear-gradient(to right,#555 50%,transparent 50%);background-size:2px 1px;"></div>
<div class="a" style="left:1346px;top:484.5px;width:1px;height:18px;background:transparent;background-image:linear-gradient(to bottom,#555 50%,transparent 50%);background-size:1px 2px;"></div>
<div class="a" style="left:1582px;top:484.5px;width:1px;height:18px;background:transparent;background-image:linear-gradient(to bottom,#555 50%,transparent 50%);background-size:1px 2px;"></div>
<div class="a" style="left:1832px;top:484.5px;width:1px;height:18px;background:transparent;background-image:linear-gradient(to bottom,#555 50%,transparent 50%);background-size:1px 2px;"></div>
<div class="a" style="left:1888px;top:484.5px;width:1px;height:18px;background:transparent;background-image:linear-gradient(to bottom,#555 50%,transparent 50%);background-size:1px 2px;"></div>
<span id="d31" class="t" style="left:1114.60px;top:505.85px;font-size:11.4px;color:#000;">w of frame</span>
<span id="d32" class="t" style="left:1349.00px;top:505.85px;font-size:11.4px;color:#000;">125.0</span>
<span id="d33" class="t" style="left:1583.50px;top:505.85px;font-size:11.4px;color:#000;">=</span>
<svg class="a" style="left:1835.5px;top:505.5px;" width="14" height="14" viewBox="0 0 14 14"><rect x="0.5" y="0.5" width="12.5" height="12.5" fill="#fff" stroke="#333" stroke-width="1"/></svg>
<div class="a" style="left:1112px;top:519.5px;width:777px;height:1px;background:transparent;background-image:linear-gradient(to right,#555 50%,transparent 50%);background-size:2px 1px;"></div>
<div class="a" style="left:1346px;top:502.5px;width:1px;height:18px;background:transparent;background-image:linear-gradient(to bottom,#555 50%,transparent 50%);background-size:1px 2px;"></div>
<div class="a" style="left:1582px;top:502.5px;width:1px;height:18px;background:transparent;background-image:linear-gradient(to bottom,#555 50%,transparent 50%);background-size:1px 2px;"></div>
<div class="a" style="left:1832px;top:502.5px;width:1px;height:18px;background:transparent;background-image:linear-gradient(to bottom,#555 50%,transparent 50%);background-size:1px 2px;"></div>
<div class="a" style="left:1888px;top:502.5px;width:1px;height:18px;background:transparent;background-image:linear-gradient(to bottom,#555 50%,transparent 50%);background-size:1px 2px;"></div>
<span id="d34" class="t" style="left:1114.60px;top:523.85px;font-size:11.4px;color:#000;">d3</span>
<span id="d35" class="t" style="left:1349.00px;top:523.85px;font-size:11.4px;color:#000;">1333.3</span>
<span id="d36" class="t" style="transform:scaleX(1.0520);left:1583.50px;top:523.85px;font-size:11.4px;color:#000;">= W / 3</span>
<svg class="a" style="left:1835.5px;top:523.5px;" width="14" height="14" viewBox="0 0 14 14"><rect x="0.5" y="0.5" width="12.5" height="12.5" fill="#fff" stroke="#333" stroke-width="1"/></svg>
<div class="a" style="left:1112px;top:537.5px;width:777px;height:1px;background:transparent;background-image:linear-gradient(to right,#555 50%,transparent 50%);background-size:2px 1px;"></div>
<div class="a" style="left:1346px;top:520.5px;width:1px;height:18px;background:transparent;background-image:linear-gradient(to bottom,#555 50%,transparent 50%);background-size:1px 2px;"></div>
<div class="a" style="left:1582px;top:520.5px;width:1px;height:18px;background:transparent;background-image:linear-gradient(to bottom,#555 50%,transparent 50%);background-size:1px 2px;"></div>
<div class="a" style="left:1832px;top:520.5px;width:1px;height:18px;background:transparent;background-image:linear-gradient(to bottom,#555 50%,transparent 50%);background-size:1px 2px;"></div>
<div class="a" style="left:1888px;top:520.5px;width:1px;height:18px;background:transparent;background-image:linear-gradient(to bottom,#555 50%,transparent 50%);background-size:1px 2px;"></div>
<div class="a" style="left:1112px;top:542px;width:777px;height:18.5px;background:#97b2d1;"></div>
<span id="d37" class="t" style="transform:scaleX(1.0474);left:1114.60px;top:545.27px;font-size:11.2px;color:#0b1626;font-weight:bold;">Data</span>
<svg class="a" style="left:1876px;top:546.5px;" width="7" height="9" viewBox="0 0 7 9"><path d="M0.5,3.8L3.5,0.8L6.5,3.8M0.5,7.8L3.5,4.8L6.5,7.8" stroke="#111" fill="none" stroke-width="1.3"/></svg>
<span id="d38" class="t" style="left:1114.60px;top:563.85px;font-size:11.4px;color:#6a6a6a;">data1</span>
<span id="d39" class="t" style="left:1349.00px;top:563.85px;font-size:11.4px;color:#6a6a6a;">0.6</span>
<span id="d40" class="t" style="transform:scaleX(1.0641);left:1583.50px;top:563.85px;font-size:11.4px;color:#000;">= D / W * 1 mm</span>
<svg class="a" style="left:1835.5px;top:563.5px;" width="14" height="14" viewBox="0 0 14 14"><rect x="0.5" y="0.5" width="12.5" height="12.5" fill="#fff" stroke="#333" stroke-width="1"/></svg>
<div class="a" style="left:1112px;top:577.5px;width:777px;height:1px;background:transparent;background-image:linear-gradient(to right,#555 50%,transparent 50%);background-size:2px 1px;"></div>
<div class="a" style="left:1346px;top:560.5px;width:1px;height:18px;background:transparent;background-image:linear-gradient(to bottom,#555 50%,transparent 50%);background-size:1px 2px;"></div>
<div class="a" style="left:1582px;top:560.5px;width:1px;height:18px;background:transparent;background-image:linear-gradient(to bottom,#555 50%,transparent 50%);background-size:1px 2px;"></div>
<div class="a" style="left:1832px;top:560.5px;width:1px;height:18px;background:transparent;background-image:linear-gradient(to bottom,#555 50%,transparent 50%);background-size:1px 2px;"></div>
<div class="a" style="left:1888px;top:560.5px;width:1px;height:18px;background:transparent;background-image:linear-gradient(to bottom,#555 50%,transparent 50%);background-size:1px 2px;"></div>
<span id="d41" class="t" style="left:1114.60px;top:581.85px;font-size:11.4px;color:#6a6a6a;">ddata</span>
<span id="d42" class="t" style="left:1349.00px;top:581.85px;font-size:11.4px;color:#6a6a6a;">2375.0</span>
<span id="d43" class="t" style="transform:scaleX(1.0634);left:1583.50px;top:581.85px;font-size:11.4px;color:#000;">= D - w of frame</span>
<svg class="a" style="left:1835.5px;top:581.5px;" width="14" height="14" viewBox="0 0 14 14"><rect x="0.5" y="0.5" width="12.5" height="12.5" fill="#fff" stroke="#333" stroke-width="1"/></svg>
<div class="a" style="left:1112px;top:595.5px;width:777px;height:1px;background:transparent;background-image:linear-gradient(to right,#555 50%,transparent 50%);background-size:2px 1px;"></div>
<div class="a" style="left:1346px;top:578.5px;width:1px;height:18px;background:transparent;background-image:linear-gradient(to bottom,#555 50%,transparent 50%);background-size:1px 2px;"></div>
<div class="a" style="left:1582px;top:578.5px;width:1px;height:18px;background:transparent;background-image:linear-gradient(to bottom,#555 50%,transparent 50%);background-size:1px 2px;"></div>
<div class="a" style="left:1832px;top:578.5px;width:1px;height:18px;background:transparent;background-image:linear-gradient(to bottom,#555 50%,transparent 50%);background-size:1px 2px;"></div>
<div class="a" style="left:1888px;top:578.5px;width:1px;height:18px;background:transparent;background-image:linear-gradient(to bottom,#555 50%,transparent 50%);background-size:1px 2px;"></div>
<span id="d44" class="t" style="left:1114.60px;top:599.85px;font-size:11.4px;color:#6a6a6a;">hdata</span>
<span id="d45" class="t" style="left:1349.00px;top:599.85px;font-size:11.4px;color:#6a6a6a;">2250.0</span>
<span id="d46" class="t" style="transform:scaleX(1.0563);left:1583.50px;top:599.85px;font-size:11.4px;color:#000;">= H - (2 * w of frame)</span>
<svg class="a" style="left:1835.5px;top:599.5px;" width="14" height="14" viewBox="0 0 14 14"><rect x="0.5" y="0.5" width="12.5" height="12.5" fill="#fff" stroke="#333" stroke-width="1"/></svg>
<div class="a" style="left:1112px;top:613.5px;width:777px;height:1px;background:transparent;background-image:linear-gradient(to right,#555 50%,transparent 50%);background-size:2px 1px;"></div>
<div class="a" style="left:1346px;top:596.5px;width:1px;height:18px;background:transparent;background-image:linear-gradient(to bottom,#555 50%,transparent 50%);background-size:1px 2px;"></div>
<div class="a" style="left:1582px;top:596.5px;width:1px;height:18px;background:transparent;background-image:linear-gradient(to bottom,#555 50%,transparent 50%);background-size:1px 2px;"></div>
<div class="a" style="left:1832px;top:596.5px;width:1px;height:18px;background:transparent;background-image:linear-gradient(to bottom,#555 50%,transparent 50%);background-size:1px 2px;"></div>
<div class="a" style="left:1888px;top:596.5px;width:1px;height:18px;background:transparent;background-image:linear-gradient(to bottom,#555 50%,transparent 50%);background-size:1px 2px;"></div>
<span id="d47" class="t" style="left:1114.60px;top:617.85px;font-size:11.4px;color:#6a6a6a;">ver2</span>
<span id="d48" class="t" style="left:1349.00px;top:617.85px;font-size:11.4px;color:#6a6a6a;">19</span>
<span id="d49" class="t" style="transform:scaleX(1.0438);left:1583.50px;top:617.85px;font-size:11.4px;color:#000;">= ver1 * data1 / 1 mm</span>
<svg class="a" style="left:1835.5px;top:617.5px;" width="14" height="14" viewBox="0 0 14 14"><rect x="0.5" y="0.5" width="12.5" height="12.5" fill="#fff" stroke="#333" stroke-width="1"/></svg>
<div class="a" style="left:1112px;top:631.5px;width:777px;height:1px;background:transparent;background-image:linear-gradient(to right,#555 50%,transparent 50%);background-size:2px 1px;"></div>
<div class="a" style="left:1346px;top:614.5px;width:1px;height:18px;background:transparent;background-image:linear-gradient(to bottom,#555 50%,transparent 50%);background-size:1px 2px;"></div>
<div class="a" style="left:1582px;top:614.5px;width:1px;height:18px;background:transparent;background-image:linear-gradient(to bottom,#555 50%,transparent 50%);background-size:1px 2px;"></div>
<div class="a" style="left:1832px;top:614.5px;width:1px;height:18px;background:transparent;background-image:linear-gradient(to bottom,#555 50%,transparent 50%);background-size:1px 2px;"></div>
<div class="a" style="left:1888px;top:614.5px;width:1px;height:18px;background:transparent;background-image:linear-gradient(to bottom,#555 50%,transparent 50%);background-size:1px 2px;"></div>
<span id="d50" class="t" style="left:1114.60px;top:635.85px;font-size:11.4px;color:#000;">w2</span>
<span id="d51" class="t" style="left:1349.00px;top:635.85px;font-size:11.4px;color:#000;">62.5</span>
<span id="d52" class="t" style="transform:scaleX(1.0720);left:1583.50px;top:635.85px;font-size:11.4px;color:#000;">= w of frame / 2</span>
<svg class="a" style="left:1835.5px;top:635.5px;" width="14" height="14" viewBox="0 0 14 14"><rect x="0.5" y="0.5" width="12.5" height="12.5" fill="#fff" stroke="#333" stroke-width="1"/></svg>
<div class="a" style="left:1112px;top:649.5px;width:777px;height:1px;background:transparent;background-image:linear-gradient(to right,#555 50%,transparent 50%);background-size:2px 1px;"></div>
<div class="a" style="left:1346px;top:632.5px;width:1px;height:18px;background:transparent;background-image:linear-gradient(to bottom,#555 50%,transparent 50%);background-size:1px 2px;"></div>
<div class="a" style="left:1582px;top:632.5px;width:1px;height:18px;background:transparent;background-image:linear-gradient(to bottom,#555 50%,transparent 50%);background-size:1px 2px;"></div>
<div class="a" style="left:1832px;top:632.5px;width:1px;height:18px;background:transparent;background-image:linear-gradient(to bottom,#555 50%,transparent 50%);background-size:1px 2px;"></div>
<div class="a" style="left:1888px;top:632.5px;width:1px;height:18px;background:transparent;background-image:linear-gradient(to bottom,#555 50%,transparent 50%);background-size:1px 2px;"></div>
<span id="d53" class="t" style="left:1114.60px;top:653.85px;font-size:11.4px;color:#6a6a6a;">wdata</span>
<span id="d54" class="t" style="left:1349.00px;top:653.85px;font-size:11.4px;color:#6a6a6a;">3875.0</span>
<span id="d55" class="t" style="transform:scaleX(1.0671);left:1583.50px;top:653.85px;font-size:11.4px;color:#000;">= W - w of frame</span>
<svg class="a" style="left:1835.5px;top:653.5px;" width="14" height="14" viewBox="0 0 14 14"><rect x="0.5" y="0.5" width="12.5" height="12.5" fill="#fff" stroke="#333" stroke-width="1"/></svg>
<div class="a" style="left:1112px;top:667.5px;width:777px;height:1px;background:transparent;background-image:linear-gradient(to right,#555 50%,transparent 50%);background-size:2px 1px;"></div>
<div class="a" style="left:1346px;top:650.5px;width:1px;height:18px;background:transparent;background-image:linear-gradient(to bottom,#555 50%,transparent 50%);background-size:1px 2px;"></div>
<div class="a" style="left:1582px;top:650.5px;width:1px;height:18px;background:transparent;background-image:linear-gradient(to bottom,#555 50%,transparent 50%);background-size:1px 2px;"></div>
<div class="a" style="left:1832px;top:650.5px;width:1px;height:18px;background:transparent;background-image:linear-gradient(to bottom,#555 50%,transparent 50%);background-size:1px 2px;"></div>
<div class="a" style="left:1888px;top:650.5px;width:1px;height:18px;background:transparent;background-image:linear-gradient(to bottom,#555 50%,transparent 50%);background-size:1px 2px;"></div>
<div class="a" style="left:1112px;top:672px;width:777px;height:18.5px;background:#97b2d1;"></div>
<span id="d56" class="t" style="transform:scaleX(1.0689);left:1114.60px;top:675.27px;font-size:11.2px;color:#0b1626;font-weight:bold;">Other</span>
<svg class="a" style="left:1876px;top:676.5px;" width="7" height="9" viewBox="0 0 7 9"><path d="M0.5,3.8L3.5,0.8L6.5,3.8M0.5,7.8L3.5,4.8L6.5,7.8" stroke="#111" fill="none" stroke-width="1.3"/></svg>
<span id="d57" class="t" style="left:1114.60px;top:693.85px;font-size:11.4px;color:#000;">door</span>
<svg class="a" style="left:1349px;top:693.5px;" width="14" height="14" viewBox="0 0 14 14"><rect x="0.5" y="0.5" width="12.5" height="12.5" fill="#fff" stroke="#333" stroke-width="1"/><path d="M2.5,6.5L5.5,9.5L11,3.5" stroke="#222" fill="none" stroke-width="1.3"/></svg>
<span id="d58" class="t" style="left:1583.50px;top:693.85px;font-size:11.4px;color:#000;">=</span>
<div class="a" style="left:1112px;top:707.5px;width:777px;height:1px;background:transparent;background-image:linear-gradient(to right,#555 50%,transparent 50%);background-size:2px 1px;"></div>
<div class="a" style="left:1346px;top:690.5px;width:1px;height:18px;background:transparent;background-image:linear-gradient(to bottom,#555 50%,transparent 50%);background-size:1px 2px;"></div>
<div class="a" style="left:1582px;top:690.5px;width:1px;height:18px;background:transparent;background-image:linear-gradient(to bottom,#555 50%,transparent 50%);background-size:1px 2px;"></div>
<div class="a" style="left:1832px;top:690.5px;width:1px;height:18px;background:transparent;background-image:linear-gradient(to bottom,#555 50%,transparent 50%);background-size:1px 2px;"></div>
<div class="a" style="left:1888px;top:690.5px;width:1px;height:18px;background:transparent;background-image:linear-gradient(to bottom,#555 50%,transparent 50%);background-size:1px 2px;"></div>
<span id="d59" class="t" style="left:1114.60px;top:711.85px;font-size:11.4px;color:#000;">ver1</span>
<span id="d60" class="t" style="left:1349.00px;top:711.85px;font-size:11.4px;color:#000;">30</span>
<span id="d61" class="t" style="left:1583.50px;top:711.85px;font-size:11.4px;color:#000;">=</span>
<svg class="a" style="left:1835.5px;top:711.5px;" width="14" height="14" viewBox="0 0 14 14"><rect x="0.5" y="0.5" width="12.5" height="12.5" fill="#fff" stroke="#333" stroke-width="1"/></svg>
<div class="a" style="left:1112px;top:725.5px;width:777px;height:1px;background:transparent;background-image:linear-gradient(to right,#555 50%,transparent 50%);background-size:2px 1px;"></div>
<div class="a" style="left:1346px;top:708.5px;width:1px;height:18px;background:transparent;background-image:linear-gradient(to bottom,#555 50%,transparent 50%);background-size:1px 2px;"></div>
<div class="a" style="left:1582px;top:708.5px;width:1px;height:18px;background:transparent;background-image:linear-gradient(to bottom,#555 50%,transparent 50%);background-size:1px 2px;"></div>
<div class="a" style="left:1832px;top:708.5px;width:1px;height:18px;background:transparent;background-image:linear-gradient(to bottom,#555 50%,transparent 50%);background-size:1px 2px;"></div>
<div class="a" style="left:1888px;top:708.5px;width:1px;height:18px;background:transparent;background-image:linear-gradient(to bottom,#555 50%,transparent 50%);background-size:1px 2px;"></div>
<div class="a" style="left:1112px;top:730px;width:777px;height:18.5px;background:#97b2d1;"></div>
<span id="d62" class="t" style="transform:scaleX(1.0783);left:1114.60px;top:733.27px;font-size:11.2px;color:#0b1626;font-weight:bold;">Identity Data</span>
<svg class="a" style="left:1876px;top:734.5px;" width="7" height="9" viewBox="0 0 7 9"><path d="M0.5,0.8L3.5,3.8L6.5,0.8M0.5,4.8L3.5,7.8L6.5,4.8" stroke="#111" fill="none" stroke-width="1.3"/></svg>
<div class="a" style="left:1347px;top:355px;width:235px;height:17.5px;background:transparent;border:1.5px solid #111;"></div>
<div class="a" style="left:1346px;top:748.5px;width:1px;height:142.5px;background:transparent;background-image:linear-gradient(to bottom,#555 50%,transparent 50%);background-size:1px 2px;"></div>
<div class="a" style="left:1582px;top:748.5px;width:1px;height:142.5px;background:transparent;background-image:linear-gradient(to bottom,#555 50%,transparent 50%);background-size:1px 2px;"></div>
<div class="a" style="left:1832px;top:748.5px;width:1px;height:142.5px;background:transparent;background-image:linear-gradient(to bottom,#555 50%,transparent 50%);background-size:1px 2px;"></div>
<div class="a" style="left:1888px;top:748.5px;width:1px;height:142.5px;background:transparent;background-image:linear-gradient(to bottom,#555 50%,transparent 50%);background-size:1px 2px;"></div>
<div class="a" style="left:1112px;top:890px;width:777px;height:1px;background:transparent;background-image:linear-gradient(to right,#555 50%,transparent 50%);background-size:2px 1px;"></div>
<svg class="a" style="left:1113px;top:906px;" width="18" height="19" viewBox="0 0 18 19"><path d="M2,15L1.5,17.5L4,17L16,5L14,3Z" fill="#e8dfc2" stroke="#333" stroke-width="1"/><path d="M13,4L15,6" stroke="#555" stroke-width="2.2"/></svg>
<svg class="a" style="left:1143px;top:905px;" width="18" height="19" viewBox="0 0 18 19"><path d="M4.5,6.5H10L13,9.5V17H4.5Z" fill="#e6edf5" stroke="#3a3a3a" stroke-width="1.2"/><path d="M10,6.5V9.5H13" fill="#fff" stroke="#3a3a3a" stroke-width="1"/><g stroke="#f29a1a" stroke-width="1.2"><path d="M3.5,1V7.5M0.5,4.2H6.5M1.3,2L5.7,6.5M5.7,2L1.3,6.5"/></g></svg>
<svg class="a" style="left:1174px;top:905px;" width="18" height="19" viewBox="0 0 18 19"><path d="M5,6.5H10L13,9.5V17H5Z" fill="#e6edf5" stroke="#3a3a3a" stroke-width="1.2"/><path d="M10,6.5V9.5H13" fill="#fff" stroke="#3a3a3a" stroke-width="1"/><path d="M0.8,1L6.8,7M6.8,1L0.8,7" stroke="#c0392b" stroke-width="1.8"/></svg>
<svg class="a" style="left:1203px;top:906px;" width="18" height="17" viewBox="0 0 18 17"><path d="M4,16V6M1,8.5L4,3L7,8.5Z" stroke="#8c8c8c" fill="#8c8c8c" stroke-width="2"/><path d="M16,2H10V16H16M10,9H15" stroke="#9aa5ad" fill="none" stroke-width="1.4"/></svg>
<svg class="a" style="left:1233px;top:906px;" width="18" height="17" viewBox="0 0 18 17"><path d="M4,2V12M0.8,10L4,15.5L7.2,10Z" stroke="#1a70b8" fill="#1a70b8" stroke-width="2.2"/><path d="M16.5,2H10.5V16H16.5M10.5,9H15.5" stroke="#1a70b8" fill="none" stroke-width="1.4"/></svg>
<svg class="a" style="left:1278px;top:906px;" width="16" height="18" viewBox="0 0 16 18"><text x="0" y="8" font-family="Liberation Sans" font-weight="bold" font-size="10" fill="#5b7c96">A</text><text x="0.3" y="16.5" font-family="Liberation Sans" font-weight="bold" font-size="10" fill="#2b3c4e">Z</text><path d="M11,2V15M8.5,11.5L11,15.5L13.5,11.5" stroke="#222" fill="none" stroke-width="1.3"/></svg>
<svg class="a" style="left:1308px;top:906px;" width="16" height="18" viewBox="0 0 16 18"><text x="0" y="8" font-family="Liberation Sans" font-weight="bold" font-size="10" fill="#5b7c96">A</text><text x="0.3" y="16.5" font-family="Liberation Sans" font-weight="bold" font-size="10" fill="#2b3c4e">Z</text><path d="M11,16V3M8.5,6.5L11,2.5L13.5,6.5" stroke="#222" fill="none" stroke-width="1.3"/></svg>
<span id="d63" class="t" style="transform:scaleX(0.9622);left:1109.40px;top:941.02px;font-size:11.2px;color:#1b64a8;text-decoration:underline;">How do I manage family types?</span>
<div class="a" style="left:1765.9px;top:905.4px;width:123.89999999999986px;height:21.300000000000068px;background:#e1e1e1;border:1px solid #adadad;"></div>
<span id="d64" class="t" style="transform:scaleX(0.9165);left:1772.50px;top:910.07px;font-size:11.5px;color:#000;">Manage Lookup Tables</span>
<div class="a" style="left:1646.2px;top:941.2px;width:75.5px;height:21.399999999999977px;background:#e1e1e1;border:1px solid #adadad;"></div>
<span id="d65" class="t" style="transform:scaleX(0.8301);left:1676.60px;top:945.97px;font-size:11.5px;color:#000;">OK</span>
<div class="a" style="left:1730.4px;top:941.2px;width:75.19999999999982px;height:21.399999999999977px;background:#e1e1e1;border:1px solid #adadad;"></div>
<span id="d66" class="t" style="transform:scaleX(0.8796);left:1751.80px;top:945.97px;font-size:11.5px;color:#000;">Cancel</span>
<div class="a" style="left:1814.2px;top:941.2px;width:75.59999999999991px;height:21.399999999999977px;background:#e1e1e1;border:2px solid #1e6fb4;"></div>
<span id="d67" class="t" style="transform:scaleX(0.8999);left:1838.00px;top:945.97px;font-size:11.5px;color:#000;">Apply</span>
<svg class="a" style="left:1891px;top:965px;" width="10" height="10" viewBox="0 0 10 10"><g fill="#b5b5b5"><rect x="7" y="1" width="2" height="2"/><rect x="4" y="4" width="2" height="2"/><rect x="7" y="4" width="2" height="2"/><rect x="1" y="7" width="2" height="2"/><rect x="4" y="7" width="2" height="2"/><rect x="7" y="7" width="2" height="2"/></g></svg>

</body></html>
